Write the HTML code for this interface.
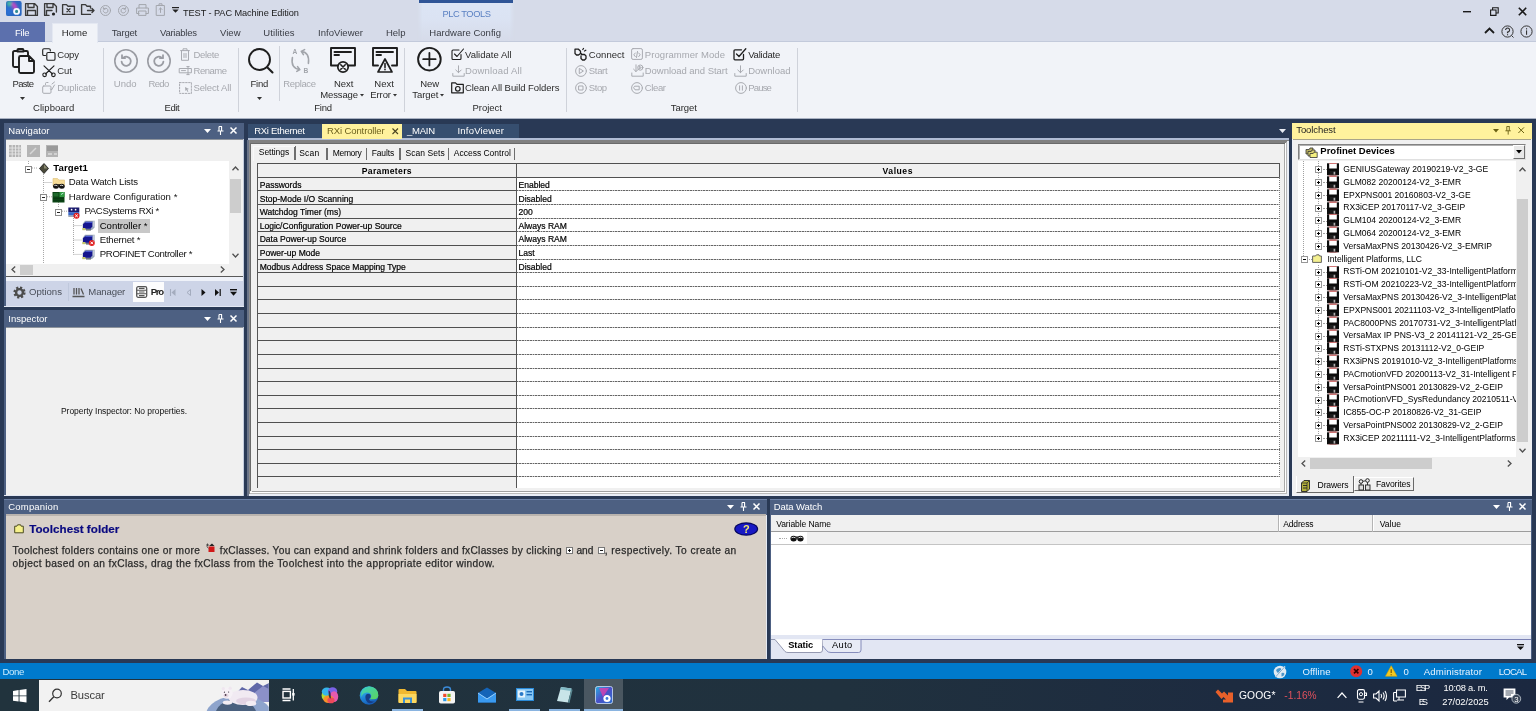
<!DOCTYPE html>
<html>
<head>
<meta charset="utf-8">
<title>TEST - PAC Machine Edition</title>
<style>
*{box-sizing:border-box;margin:0;padding:0}
html,body{width:1536px;height:711px;overflow:hidden;background:#293955;will-change:transform;font-family:"Liberation Sans",sans-serif;font-size:11px;color:#000}
.abs{position:absolute}
.t{position:absolute;white-space:nowrap;line-height:1}
svg{position:absolute;overflow:visible}
/* ---------- title / ribbon ---------- */
#titlebar{left:0;top:0;width:1536px;height:22px;background:#d6dbe9}
#tabrow{left:0;top:22px;width:1536px;height:20px;background:#d6dbe9;border-bottom:1px solid #c3cadb}
#ribbon{left:0;top:42px;width:1536px;height:77px;background:#f1f3f8;border-bottom:1px solid #a9b1c2}
.rt{font-size:11px;color:#1e1e1e}
.rd{font-size:11px;color:#a9abb0}
.rsep{position:absolute;width:1px;background:#d3d6de;top:47px;height:64px}
/* ---------- panels ---------- */
.ptitle{position:absolute;height:16px;background:#4d6082;color:#fff;font-size:11px}
.ptitle .t{top:2px;left:4px;color:#fff;font-size:11px}
.pbody{position:absolute;background:#f0f0f0}
.tree{font-size:11px}
/* ---------- grid ---------- */
.gl{position:absolute;left:258px;width:1021px;height:1px;background:#6b6b6b}
.dot{left:517px;width:762.5px;height:1.1px;background:repeating-linear-gradient(90deg,#666 0,#666 .9px,#c2c2c2 .9px,#c2c2c2 1.6px)}
.dl{position:absolute;left:517px;width:762px;height:0;border-top:1px dotted #8a8a8a}
.gp{position:absolute;left:259px;font-size:10px;color:#000;white-space:nowrap;line-height:1}
.gv{position:absolute;left:518px;font-size:10px;color:#000;white-space:nowrap;line-height:1}
.tc{position:absolute;font-size:9.5px;color:#000;white-space:nowrap;line-height:1;left:1343px}
</style>
</head>
<body>
<!-- TITLE BAR -->
<div id="titlebar" class="abs"></div>
<div id="tabrow" class="abs"></div>
<div id="ribbon" class="abs"></div>
<div class="abs" style="left:417px;top:0px;width:98px;height:41px;background:transparent;background:linear-gradient(180deg,#dce5f5 0%,#dbe3f3 45%,#d6dbe9 100%);-webkit-mask-image:linear-gradient(90deg,transparent 0,#000 6%,#000 94%,transparent 100%)"></div>
<div class="abs" style="left:419px;top:0px;width:94px;height:3px;background:#2f5597;"></div>
<div class="t" style="left:442.4px;top:9.7px;font-size:9.3px;color:#5a80c2;letter-spacing:-0.408px;">PLC TOOLS</div>
<svg style="left:6.4px;top:1.2px" width="15.8" height="15.1" viewBox="0 0 15.8 15.1"><defs><filter id="ab" x="-30%" y="-30%" width="160%" height="160%"><feGaussianBlur stdDeviation="1.1"/></filter><clipPath id="ac"><rect x="0" y="0" width="15.8" height="15.1" rx="2.2"/></clipPath></defs><g clip-path="url(#ac)"><rect x="0" y="0" width="15.8" height="15.1" fill="#2a68c2"/><g filter="url(#ab)"><circle cx="3.6" cy="2.6" r="2.6" fill="#45b8a4"/><ellipse cx="8.6" cy="5.4" rx="2.4" ry="4.6" transform="rotate(-28 8.6 5.4)" fill="#b84cc4"/><ellipse cx="3" cy="10" rx="3" ry="4" fill="#2a70d4"/></g><circle cx="10.6" cy="10.4" r="2.5" fill="#2f8a96" stroke="#f4f8ff" stroke-width="1.9"/></g></svg>
<svg style="left:25px;top:3px" width="13" height="13" viewBox="0 0 13 13"><path fill="none" stroke="#3a3a3a" stroke-linejoin="round" stroke-linecap="round" stroke-width="1.35" d="M.6 .6 H9.5 L12.4 3.5 V12.4 H.6 Z M3 .6 V4.5 H9 V.6 M2.5 12.4 V7.5 H10.5 V12.4"/></svg>
<svg style="left:44px;top:3px" width="13" height="13" viewBox="0 0 13 13"><path fill="none" stroke="#3a3a3a" stroke-linejoin="round" stroke-linecap="round" stroke-width="1.35" d="M.6 .6 H9.5 L12.4 3.5 V9 M.6 .6 V12.4 H5 M3 .6 V4.5 H9 V.6 M2.5 12.4 V7.5 H8"/><circle cx="9.5" cy="11" r="1.6" fill="#222"/></svg>
<svg style="left:62px;top:4px" width="13" height="11" viewBox="0 0 13 11"><path fill="none" stroke="#3a3a3a" stroke-linejoin="round" stroke-linecap="round" stroke-width="1.35" d="M.6 10.4 V.6 H4.5 L6 2.2 H12.4 V10.4 Z M5 4.8 L8 7.8 M8 4.8 L5 7.8"/></svg>
<svg style="left:81px;top:4px" width="14" height="11" viewBox="0 0 14 11"><path fill="none" stroke="#3a3a3a" stroke-linejoin="round" stroke-linecap="round" stroke-width="1.35" d="M9.5 10.4 H.6 V.6 H4.5 L6 2.2 H9.5 V4 M6.5 6.5 H13 M11 4.5 L13 6.5 L11 8.5"/></svg>
<svg style="left:100px;top:5px" width="11" height="11" viewBox="0 0 11 11"><circle cx="5.5" cy="5.5" r="5" fill="none" stroke="#a3a6ad" stroke-linejoin="round" stroke-linecap="round" stroke-width="1"/><path fill="none" stroke="#a3a6ad" stroke-linejoin="round" stroke-linecap="round" stroke-width="1" d="M3.2 5.8 A2.4 2.4 0 1 0 4.2 3.6 M3.4 2.6 V4.2 H5"/></svg>
<svg style="left:118px;top:5px" width="11" height="11" viewBox="0 0 11 11"><circle cx="5.5" cy="5.5" r="5" fill="none" stroke="#a3a6ad" stroke-linejoin="round" stroke-linecap="round" stroke-width="1"/><path fill="none" stroke="#a3a6ad" stroke-linejoin="round" stroke-linecap="round" stroke-width="1" d="M7.8 5.8 A2.4 2.4 0 1 1 6.8 3.6 M7.6 2.6 V4.2 H6"/></svg>
<svg style="left:136px;top:4px" width="13" height="12" viewBox="0 0 13 12"><path fill="none" stroke="#a3a6ad" stroke-linejoin="round" stroke-linecap="round" stroke-width="1" d="M3 4 V.6 H10 V4 M3 9.5 H.6 V4 H12.4 V9.5 H10 M3 7 H10 V11.4 H3 Z"/></svg>
<svg style="left:156px;top:3px" width="9" height="13" viewBox="0 0 9 13"><path fill="none" stroke="#a3a6ad" stroke-linejoin="round" stroke-linecap="round" stroke-width="1" d="M.6 2.5 H8.4 V12.4 H.6 Z M3 2.5 V.8 H6 V2.5 M4.5 5 V9.5 M3 6.5 L4.5 5 L6 6.5"/></svg>
<svg style="left:172px;top:7px" width="7" height="6" viewBox="0 0 7 6"><rect x="0" y="0" width="7" height="1.2" fill="#222"/><path d="M.3 2.6 H6.7 L3.5 5.8 Z" fill="#222"/></svg>
<div class="t" style="left:183.0px;top:8.6px;font-size:9.2px;color:#1a1a1a;letter-spacing:-0.071px;">TEST - PAC Machine Edition</div>
<svg style="left:1463px;top:11px" width="8" height="2" viewBox="0 0 8 2"><rect x="0" y="0" width="8" height="1.4" fill="#1a1a1a"/></svg>
<svg style="left:1490px;top:7px" width="9" height="9" viewBox="0 0 9 9"><path stroke="#1a1a1a" fill="none" stroke-width="1.1" d="M.6 3 H6 V8.4 H.6 Z M2.6 3 V.8 H8.2 V6 H6"/></svg>
<svg style="left:1518px;top:7px" width="9" height="9" viewBox="0 0 9 9"><path stroke="#1a1a1a" fill="none" stroke-width="1.6" d="M.8 .8 L8.2 8.2 M8.2 .8 L.8 8.2"/></svg>
<svg style="left:1484px;top:27px" width="11" height="7" viewBox="0 0 11 7"><path stroke="#1a1a1a" fill="none" stroke-width="1.8" d="M1 6 L5.5 1.5 L10 6"/></svg>
<svg style="left:1501px;top:25px" width="13" height="13" viewBox="0 0 13 13"><circle cx="6.5" cy="6.5" r="5.6" stroke="#333" fill="none" stroke-width="1"/><path stroke="#333" fill="none" stroke-width="1.1" d="M4.6 5 A2 2 0 1 1 6.5 7 V8.2"/><rect x="6" y="9.2" width="1.1" height="1.1" fill="#333"/><path stroke="#333" fill="none" stroke-width="1" d="M10.5 10.5 L12.5 12.5"/></svg>
<svg style="left:1520px;top:25px" width="13" height="13" viewBox="0 0 13 13"><circle cx="6.5" cy="6.5" r="5.6" stroke="#333" fill="none" stroke-width="1"/><rect x="6" y="3.2" width="1.1" height="1.2" fill="#333"/><rect x="6" y="5.4" width="1.1" height="4.4" fill="#333"/></svg>
<div class="abs" style="left:0px;top:22px;width:45px;height:19.5px;background:#5c70ad;"></div>
<div class="abs" style="left:52px;top:23px;width:46px;height:20px;background:#f1f3f8;border:1px solid #e4e8f2;border-bottom:none"></div>
<div class="t" style="left:15.0px;top:28.1px;font-size:9.5px;color:#ffffff;letter-spacing:-0.269px;">File</div>
<div class="t" style="left:61.8px;top:28.1px;font-size:9.5px;color:#222;letter-spacing:0.053px;">Home</div>
<div class="t" style="left:111.8px;top:28.1px;font-size:9.5px;color:#3a3d45;letter-spacing:-0.201px;">Target</div>
<div class="t" style="left:160.0px;top:28.1px;font-size:9.5px;color:#3a3d45;letter-spacing:-0.238px;">Variables</div>
<div class="t" style="left:220.0px;top:28.1px;font-size:9.5px;color:#3a3d45;letter-spacing:0.026px;">View</div>
<div class="t" style="left:263.3px;top:28.1px;font-size:9.5px;color:#3a3d45;letter-spacing:0.073px;">Utilities</div>
<div class="t" style="left:318.0px;top:28.1px;font-size:9.5px;color:#3a3d45;letter-spacing:0.032px;">InfoViewer</div>
<div class="t" style="left:386.0px;top:28.1px;font-size:9.5px;color:#3a3d45;letter-spacing:-0.013px;">Help</div>
<div class="t" style="left:429.3px;top:28.1px;font-size:9.5px;color:#3a3d45;letter-spacing:0.030px;">Hardware Config</div>

<div class="abs" style="left:103.0px;top:48px;width:1px;height:63.5px;background:#cfd2da;"></div>
<div class="abs" style="left:238.0px;top:48px;width:1px;height:63.5px;background:#cfd2da;"></div>
<div class="abs" style="left:279.0px;top:45.5px;width:1px;height:55.5px;background:#cfd2da;"></div>
<div class="abs" style="left:404.0px;top:48px;width:1px;height:63.5px;background:#cfd2da;"></div>
<div class="abs" style="left:566.0px;top:48px;width:1px;height:63.5px;background:#cfd2da;"></div>
<div class="abs" style="left:797.0px;top:48px;width:1px;height:63.5px;background:#cfd2da;"></div>
<div class="t" style="left:33.0px;top:103.3px;font-size:9.5px;color:#2a2a2a;letter-spacing:0.067px;">Clipboard</div>
<div class="t" style="left:164.6px;top:103.3px;font-size:9.5px;color:#2a2a2a;letter-spacing:-0.423px;">Edit</div>
<div class="t" style="left:314.3px;top:103.3px;font-size:9.5px;color:#2a2a2a;letter-spacing:-0.260px;">Find</div>
<div class="t" style="left:472.4px;top:103.3px;font-size:9.5px;color:#2a2a2a;letter-spacing:0.005px;">Project</div>
<div class="t" style="left:670.8px;top:103.3px;font-size:9.5px;color:#2a2a2a;letter-spacing:-0.061px;">Target</div>
<svg style="left:11.5px;top:48px" width="24" height="26" viewBox="0 0 24 26"><path fill="none" stroke="#1e1e1e" stroke-linejoin="round" stroke-linecap="round" stroke-width="1.9" d="M6 3 H2.5 Q1 3 1 4.5 V17.5 Q1 19 2.5 19 H7 M13 3 H14.5 Q16 3 16 4.5 V7 M6.5 1 H10.5 Q11.5 1 11.5 2 V3.5 H5.5 V2 Q5.5 1 6.5 1 Z M8.5 8 H17 L22 13 V23.5 Q22 25 20.5 25 H8.5 Q7 25 7 23.5 V9.5 Q7 8 8.5 8 Z M17 8 V13 H22"/></svg>
<div class="t" style="left:12.5px;top:79.1px;font-size:9.5px;color:#2a2a2a;letter-spacing:-0.698px;">Paste</div>
<svg style="left:20px;top:96.5px" width="5" height="3" viewBox="0 0 5 3"><path d="M0 0 H5 L2.5 3 Z" fill="#333"/></svg>
<svg style="left:42px;top:47.5px" width="14" height="13" viewBox="0 0 14 13"><path fill="none" stroke="#1e1e1e" stroke-linejoin="round" stroke-linecap="round" stroke-width="1.1" d="M3.5 7.5 H2 Q.7 7.5 .7 6.2 V2 Q.7 .7 2 .7 H7 Q8.3 .7 8.3 2 V3 M6 4.5 H11.8 Q13 4.5 13 5.7 V11 Q13 12.3 11.8 12.3 H6 Q4.8 12.3 4.8 11 V5.7 Q4.8 4.5 6 4.5 Z"/></svg>
<div class="t" style="left:57.3px;top:49.6px;font-size:9.5px;color:#2a2a2a;letter-spacing:-0.159px;">Copy</div>
<svg style="left:42px;top:64.5px" width="14" height="12" viewBox="0 0 14 12"><path fill="none" stroke="#1e1e1e" stroke-linejoin="round" stroke-linecap="round" stroke-width="1.1" d="M2 .8 L10.5 9 M12 .8 L3.5 9"/><circle cx="2.6" cy="9.8" r="1.8" fill="none" stroke="#1e1e1e" stroke-linejoin="round" stroke-linecap="round" stroke-width="1.1"/><circle cx="11.4" cy="9.8" r="1.8" fill="none" stroke="#1e1e1e" stroke-linejoin="round" stroke-linecap="round" stroke-width="1.1"/></svg>
<div class="t" style="left:57.3px;top:65.9px;font-size:9.5px;color:#2a2a2a;letter-spacing:-0.042px;">Cut</div>
<svg style="left:42px;top:81px" width="14" height="13" viewBox="0 0 14 13"><path fill="none" stroke="#a9abb1" stroke-linejoin="round" stroke-linecap="round" stroke-width="1" d="M1.8 5 H8 Q9 5 9 6 V11.2 Q9 12.3 8 12.3 H1.8 Q.7 12.3 .7 11.2 V6 Q.7 5 1.8 5 Z M3.5 3.5 V2.5 Q3.5 1.5 4.5 1.5 H6 M10 3 L12.5 1 M12.5 4 L9.5 9 L8.5 8"/></svg>
<div class="t" style="left:57.3px;top:83.1px;font-size:9.5px;color:#a6a8ae;letter-spacing:-0.113px;">Duplicate</div>
<svg style="left:113.5px;top:48.5px" width="24" height="24" viewBox="0 0 24 24"><circle cx="12" cy="12" r="11.2" fill="none" stroke="#9a9ca3" stroke-width="1.6"/><path fill="none" stroke="#9a9ca3" stroke-linecap="round" stroke-linejoin="round" stroke-width="1.8" d="M7.6 12.6 A4.6 4.6 0 1 0 9.4 8.6 M8 6.2 V9.2 H11"/></svg>
<div class="t" style="left:113.8px;top:79.1px;font-size:9.5px;color:#a6a8ae;">Undo</div>
<svg style="left:146.5px;top:48.5px" width="24" height="24" viewBox="0 0 24 24"><circle cx="12" cy="12" r="11.2" fill="none" stroke="#9a9ca3" stroke-width="1.6"/><path fill="none" stroke="#9a9ca3" stroke-linecap="round" stroke-linejoin="round" stroke-width="1.8" d="M16.4 12.6 A4.6 4.6 0 1 1 14.6 8.6 M16 6.2 V9.2 H13"/></svg>
<div class="t" style="left:148.4px;top:79.1px;font-size:9.5px;color:#a6a8ae;letter-spacing:-0.604px;">Redo</div>
<svg style="left:180px;top:47.5px" width="10" height="13" viewBox="0 0 10 13"><path fill="none" stroke="#a9abb1" stroke-linejoin="round" stroke-linecap="round" stroke-width="1" d="M.6 2.6 H9.4 M3 2.6 V.8 H7 V2.6 M1.5 2.6 V12.3 H8.5 V2.6 M4 5.5 V9.5 M6 5.5 V9.5"/></svg>
<div class="t" style="left:193.5px;top:49.6px;font-size:9.5px;color:#a6a8ae;letter-spacing:-0.332px;">Delete</div>
<svg style="left:178.5px;top:66px" width="13" height="9" viewBox="0 0 13 9"><path fill="none" stroke="#a9abb1" stroke-linejoin="round" stroke-linecap="round" stroke-width="1" d="M.6 2.5 H12.4 V6.8 H.6 Z M2.5 4.6 H6.5 M9 .6 V8.6 M7.8 .6 H10.2 M7.8 8.6 H10.2"/></svg>
<div class="t" style="left:193.5px;top:65.9px;font-size:9.5px;color:#a6a8ae;letter-spacing:-0.482px;">Rename</div>
<svg style="left:178.5px;top:82px" width="13" height="12" viewBox="0 0 13 12"><rect x=".6" y=".6" width="11.8" height="10.8" fill="none" stroke="#a9abb1" stroke-linejoin="round" stroke-linecap="round" stroke-width="1" stroke-dasharray="1.6 1.4"/><path d="M6 5 L10 7 L8.3 7.6 L9.4 9.6 L8.6 10 L7.5 8 L6.4 9 Z" fill="#a9abb1"/></svg>
<div class="t" style="left:193.5px;top:83.1px;font-size:9.5px;color:#a6a8ae;letter-spacing:-0.142px;">Select All</div>
<svg style="left:247.7px;top:47.6px" width="26" height="26" viewBox="0 0 26 26"><circle cx="11.5" cy="11.5" r="10.5" fill="none" stroke="#1e1e1e" stroke-linejoin="round" stroke-linecap="round" stroke-width="1.9"/><path fill="none" stroke="#1e1e1e" stroke-linejoin="round" stroke-linecap="round" stroke-width="2.1" d="M19.2 19.2 L24.5 24.5"/></svg>
<div class="t" style="left:250.5px;top:79.1px;font-size:9.5px;color:#2a2a2a;letter-spacing:-0.260px;">Find</div>
<svg style="left:257px;top:96.5px" width="5" height="3" viewBox="0 0 5 3"><path d="M0 0 H5 L2.5 3 Z" fill="#333"/></svg>
<svg style="left:289px;top:47px" width="22" height="27" viewBox="0 0 22 27"><path fill="none" stroke="#a2a5ab" stroke-linecap="round" stroke-linejoin="round" stroke-width="1.6" d="M12.3 4.4 Q20.8 5.4 19.4 16.4 M12.3 4.4 L15.6 2.6 M12.3 4.4 L14.4 7.6 M3.4 10.6 Q1.4 21 10.8 22.6 M10.8 22.6 L7.8 24.4 M10.8 22.6 L8.6 19.6"/><text x="3.6" y="7" font-size="6.6" font-family="Liberation Sans" font-weight="bold" fill="#a2a5ab">A</text><text x="14.6" y="25.6" font-size="6.6" font-family="Liberation Sans" font-weight="bold" fill="#a2a5ab">B</text></svg>
<div class="t" style="left:283.3px;top:79.1px;font-size:9.5px;color:#a6a8ae;letter-spacing:-0.359px;">Replace</div>
<svg style="left:330.4px;top:47.3px" width="26" height="27" viewBox="0 0 26 27"><path fill="none" stroke="#1e1e1e" stroke-linejoin="round" stroke-linecap="round" stroke-width="1.9" d="M8 18.5 H1 V1 H25 V18.5 H18 M4.5 5 H21 M4.5 8 H9"/><circle cx="13" cy="20" r="5.2" fill="none" stroke="#1e1e1e" stroke-linejoin="round" stroke-linecap="round" stroke-width="1.7" fill="#f1f3f8"/><path fill="none" stroke="#1e1e1e" stroke-linejoin="round" stroke-linecap="round" stroke-width="1.6" d="M10.8 17.8 L15.2 22.2 M15.2 17.8 L10.8 22.2"/></svg>
<div class="t" style="left:333.9px;top:79.1px;font-size:9.5px;color:#2a2a2a;letter-spacing:-0.011px;">Next</div>
<div class="t" style="left:320.3px;top:89.6px;font-size:9.5px;color:#2a2a2a;letter-spacing:-0.141px;">Message</div>
<svg style="left:359.5px;top:93.5px" width="4" height="2.5" viewBox="0 0 4 2.5"><path d="M0 0 H4 L2 2.5 Z" fill="#333"/></svg>
<svg style="left:372px;top:47.3px" width="26" height="27" viewBox="0 0 26 27"><path fill="none" stroke="#1e1e1e" stroke-linejoin="round" stroke-linecap="round" stroke-width="1.9" d="M6 18.5 H1 V1 H25 V18.5 H20 M4.5 5 H21 M4.5 8 H9"/><path fill="none" stroke="#1e1e1e" stroke-linejoin="round" stroke-linecap="round" stroke-width="1.7" fill="#f1f3f8" d="M13 12 L20 25 H6 Z"/><path fill="none" stroke="#1e1e1e" stroke-linejoin="round" stroke-linecap="round" stroke-width="1.6" d="M13 16.5 V20.5 M13 22.4 V22.8"/></svg>
<div class="t" style="left:374.2px;top:79.1px;font-size:9.5px;color:#2a2a2a;letter-spacing:0.089px;">Next</div>
<div class="t" style="left:370.3px;top:89.6px;font-size:9.5px;color:#2a2a2a;letter-spacing:-0.103px;">Error</div>
<svg style="left:392.5px;top:93.5px" width="4" height="2.5" viewBox="0 0 4 2.5"><path d="M0 0 H4 L2 2.5 Z" fill="#333"/></svg>
<svg style="left:417px;top:47.4px" width="25" height="25" viewBox="0 0 25 25"><circle cx="12.4" cy="12.2" r="11.3" fill="none" stroke="#1e1e1e" stroke-linejoin="round" stroke-linecap="round" stroke-width="1.9"/><path fill="none" stroke="#1e1e1e" stroke-linejoin="round" stroke-linecap="round" stroke-width="1.8" d="M12.4 6 V18.4 M6.2 12.2 H18.6"/></svg>
<div class="t" style="left:420.3px;top:79.1px;font-size:9.5px;color:#2a2a2a;letter-spacing:-0.153px;">New</div>
<div class="t" style="left:412.2px;top:89.6px;font-size:9.5px;color:#2a2a2a;letter-spacing:-0.021px;">Target</div>
<svg style="left:440px;top:93.5px" width="4" height="2.5" viewBox="0 0 4 2.5"><path d="M0 0 H4 L2 2.5 Z" fill="#333"/></svg>
<svg style="left:451px;top:48px" width="14" height="13" viewBox="0 0 14 13"><path fill="none" stroke="#1e1e1e" stroke-linejoin="round" stroke-linecap="round" stroke-width="1.1" d="M10 6.5 V10.5 Q10 11.5 9 11.5 H2 Q1 11.5 1 10.5 V3 Q1 2 2 2 H8 M3.5 6 L6 8.5 L12.5 1"/></svg>
<div class="t" style="left:465.0px;top:49.6px;font-size:9.5px;color:#2a2a2a;letter-spacing:0.018px;">Validate All</div>
<svg style="left:451.5px;top:64.5px" width="13" height="12" viewBox="0 0 13 12"><path fill="none" stroke="#a9abb1" stroke-linejoin="round" stroke-linecap="round" stroke-width="1" d="M6.5 .8 V7.5 M3.8 5 L6.5 7.7 L9.2 5 M.8 8.5 V11.2 H12.2 V8.5"/></svg>
<div class="t" style="left:465.0px;top:65.9px;font-size:9.5px;color:#a6a8ae;letter-spacing:0.180px;">Download All</div>
<svg style="left:451px;top:81.5px" width="13" height="12" viewBox="0 0 13 12"><path fill="none" stroke="#1e1e1e" stroke-linejoin="round" stroke-linecap="round" stroke-width="1.2" d="M.7 10.8 V.8 H4.5 L6 2.4 H12.3 V10.8 Z"/><circle cx="6.8" cy="6.8" r="2.3" fill="none" stroke="#1e1e1e" stroke-linejoin="round" stroke-linecap="round" stroke-width="1.2"/></svg>
<div class="t" style="left:465.0px;top:83.1px;font-size:9.5px;color:#2a2a2a;letter-spacing:-0.054px;">Clean All Build Folders</div>
<svg style="left:574px;top:47.5px" width="13" height="13" viewBox="0 0 13 13"><path fill="none" stroke="#1e1e1e" stroke-linejoin="round" stroke-linecap="round" stroke-width="1.3" d="M1 1.2 H4.5 L6.5 3.2 V5.5 L4.5 7 H2.5 L1 5.5 Z M6.5 5 L8 6.5 M7.5 6.5 H10.5 L12 8 V10.5 L10.5 12 H8.5 L7 10.5 V8 M8.8 1.5 L9.5 .5 M10.5 3 L11.8 2.3"/></svg>
<div class="t" style="left:588.8px;top:49.6px;font-size:9.5px;color:#2a2a2a;letter-spacing:0.053px;">Connect</div>
<svg style="left:574.5px;top:65px" width="12" height="12" viewBox="0 0 12 12"><circle cx="6" cy="6" r="5.4" fill="none" stroke="#a9abb1" stroke-linejoin="round" stroke-linecap="round" stroke-width="1"/><path fill="none" stroke="#a9abb1" stroke-linejoin="round" stroke-linecap="round" stroke-width="1" d="M4.6 3.6 L8.4 6 L4.6 8.4 Z"/></svg>
<div class="t" style="left:588.8px;top:65.9px;font-size:9.5px;color:#a6a8ae;letter-spacing:-0.316px;">Start</div>
<svg style="left:574.5px;top:82px" width="12" height="12" viewBox="0 0 12 12"><circle cx="6" cy="6" r="5.4" fill="none" stroke="#a9abb1" stroke-linejoin="round" stroke-linecap="round" stroke-width="1"/><rect x="4" y="4" width="4" height="4" fill="none" stroke="#a9abb1" stroke-linejoin="round" stroke-linecap="round" stroke-width="1"/></svg>
<div class="t" style="left:588.8px;top:83.1px;font-size:9.5px;color:#a6a8ae;letter-spacing:-0.448px;">Stop</div>
<svg style="left:630.5px;top:48px" width="12" height="12" viewBox="0 0 12 12"><rect x=".6" y=".6" width="10.8" height="10.8" rx="1.5" fill="none" stroke="#a9abb1" stroke-linejoin="round" stroke-linecap="round" stroke-width="1"/><path fill="none" stroke="#a9abb1" stroke-linejoin="round" stroke-linecap="round" stroke-width="1" d="M4.3 5 L2.8 6.8 L4.3 8.6 M7.7 5 L9.2 6.8 L7.7 8.6 M6.5 3.5 L5.5 9.5"/></svg>
<div class="t" style="left:644.8px;top:49.6px;font-size:9.5px;color:#a6a8ae;letter-spacing:0.072px;">Programmer Mode</div>
<svg style="left:630.5px;top:64px" width="13" height="13" viewBox="0 0 13 13"><path fill="none" stroke="#a9abb1" stroke-linejoin="round" stroke-linecap="round" stroke-width="1" d="M5 .8 V7.5 M2.6 5.2 L5 7.6 L7.4 5.2 M.8 9 V12.2 H12.2 V9"/><circle cx="9.3" cy="3.6" r="2.6" fill="none" stroke="#a9abb1" stroke-linejoin="round" stroke-linecap="round" stroke-width="1"/><path fill="none" stroke="#a9abb1" stroke-linejoin="round" stroke-linecap="round" stroke-width="1" d="M8.6 2.5 L10.4 3.6 L8.6 4.7 Z"/></svg>
<div class="t" style="left:644.8px;top:65.9px;font-size:9.5px;color:#a6a8ae;letter-spacing:-0.038px;">Download and Start</div>
<svg style="left:630.5px;top:82px" width="12" height="12" viewBox="0 0 12 12"><circle cx="6" cy="6" r="5.4" fill="none" stroke="#a9abb1" stroke-linejoin="round" stroke-linecap="round" stroke-width="1"/><path fill="none" stroke="#a9abb1" stroke-linejoin="round" stroke-linecap="round" stroke-width="1" d="M4 4.2 H8.2 V7.8 H4 L2.8 6 Z"/></svg>
<div class="t" style="left:644.8px;top:83.1px;font-size:9.5px;color:#a6a8ae;letter-spacing:-0.376px;">Clear</div>
<svg style="left:733px;top:47.5px" width="14" height="13" viewBox="0 0 14 13"><path fill="none" stroke="#1e1e1e" stroke-linejoin="round" stroke-linecap="round" stroke-width="1.3" d="M10.5 6.5 V10.8 Q10.5 11.8 9.5 11.8 H2 Q1 11.8 1 10.8 V2.8 Q1 1.8 2 1.8 H8.5 M3.5 6 L6 8.5 L12.8 .8"/></svg>
<div class="t" style="left:748.2px;top:49.6px;font-size:9.5px;color:#2a2a2a;letter-spacing:-0.232px;">Validate</div>
<svg style="left:734px;top:64.5px" width="13" height="12" viewBox="0 0 13 12"><path fill="none" stroke="#a9abb1" stroke-linejoin="round" stroke-linecap="round" stroke-width="1" d="M6.5 .8 V7.5 M3.8 5 L6.5 7.7 L9.2 5 M.8 8.5 V11.2 H12.2 V8.5"/></svg>
<div class="t" style="left:748.2px;top:65.9px;font-size:9.5px;color:#a6a8ae;letter-spacing:0.021px;">Download</div>
<svg style="left:734.5px;top:82px" width="12" height="12" viewBox="0 0 12 12"><circle cx="6" cy="6" r="5.4" fill="none" stroke="#a9abb1" stroke-linejoin="round" stroke-linecap="round" stroke-width="1"/><path fill="none" stroke="#a9abb1" stroke-linejoin="round" stroke-linecap="round" stroke-width="1" d="M4.6 3.8 V8.2 M7.4 3.8 V8.2"/></svg>
<div class="t" style="left:748.2px;top:83.1px;font-size:9.5px;color:#a6a8ae;letter-spacing:-0.809px;">Pause</div>

<div class="abs" style="left:4px;top:122.5px;width:240px;height:183.5px;background:#4d6082;"></div>
<div class="t" style="left:8.3px;top:125.7px;font-size:9.5px;color:#fff;letter-spacing:0.068px;">Navigator</div>
<svg style="left:204.3px;top:129.1px" width="7" height="4" viewBox="0 0 7 4"><path d="M0 0 H7 L3.5 4 Z" fill="#fff"/></svg>
<svg style="left:217.3px;top:126.1px" width="7" height="9" viewBox="0 0 7 9"><path d="M2 .5 H5 M2 .5 V5 M4.6 .5 V5 M.5 5 H6.5 M3.5 5 V9" stroke="#fff" stroke-width="1.1" fill="none"/><rect x="4" y=".5" width="1" height="4.5" fill="#fff"/></svg>
<svg style="left:230.3px;top:127.1px" width="7" height="7" viewBox="0 0 7 7"><path d="M.5 .5 L6.5 6.5 M6.5 .5 L.5 6.5" stroke="#fff" stroke-width="1.5" fill="none"/></svg>
<div class="abs" style="left:6px;top:139px;width:237px;height:138px;background:#f0f0f0;"></div>
<div class="abs" style="left:243px;top:139px;width:1px;height:167px;background:#c3ccdd;"></div>
<div class="abs" style="left:6px;top:139px;width:237px;height:1.3px;background:#8e949c;"></div>
<div class="abs" style="left:8.7px;top:145px;width:12.5px;height:11.8px;background:#b4b4b4;"></div>
<div class="abs" style="left:27px;top:145px;width:12.5px;height:11.8px;background:#b4b4b4;"></div>
<div class="abs" style="left:45.8px;top:145px;width:12.5px;height:11.8px;background:#b4b4b4;"></div>
<svg style="left:8.7px;top:145px" width="13" height="12" viewBox="0 0 13 12"><path d="M0 3 H13 M0 6 H13 M0 9 H13 M3.2 0 V12 M6.5 0 V12 M9.8 0 V12" stroke="#e6e6e6" stroke-width=".9"/></svg>
<svg style="left:27px;top:145px" width="13" height="12" viewBox="0 0 13 12"><path d="M3 9 L6 6 L9 3" stroke="#d8d8d8" stroke-width="1.4"/></svg>
<svg style="left:45.8px;top:145px" width="13" height="12" viewBox="0 0 13 12"><rect x="1" y="1" width="11" height="5" fill="#9a9a9a"/><path d="M2 9 H6 M8 9 H11" stroke="#dcdcdc" stroke-width="1.4"/></svg>
<div class="abs" style="left:6px;top:161px;width:223px;height:102.5px;background:#ffffff;"></div>
<svg style="left:0px;top:161px" width="230" height="103" viewBox="0 0 230 103"><path stroke="#a8a8a8" stroke-width="1" stroke-dasharray="1 1" fill="none" d="M28.5 0 V3.5 M32 7 H38 M43.5 11 V102 M43.5 21.5 H52 M47 35.8 H52 M58.5 41 V46 M62 50.2 H68 M73.5 55 V93.5 M73.5 64.6 H82 M73.5 79 H82 M73.5 93.4 H82"/></svg>
<svg style="left:24.8px;top:165.6px" width="7" height="7" viewBox="0 0 7 7"><rect x=".5" y=".5" width="6" height="6" fill="#fff" stroke="#8a8a8a" stroke-width="1"/><path d="M2 3.5 H5" stroke="#222" stroke-width="1"/></svg>
<svg style="left:40.2px;top:194.4px" width="7" height="7" viewBox="0 0 7 7"><rect x=".5" y=".5" width="6" height="6" fill="#fff" stroke="#8a8a8a" stroke-width="1"/><path d="M2 3.5 H5" stroke="#222" stroke-width="1"/></svg>
<svg style="left:55.3px;top:208.79999999999998px" width="7" height="7" viewBox="0 0 7 7"><rect x=".5" y=".5" width="6" height="6" fill="#fff" stroke="#8a8a8a" stroke-width="1"/><path d="M2 3.5 H5" stroke="#222" stroke-width="1"/></svg>
<svg style="left:38.8px;top:162.5px" width="10" height="11" viewBox="0 0 10 11"><path d="M5 .5 L9.5 5.5 L5 10.5 L.5 5.5 Z" fill="#4a4a3a" stroke="#1a1a1a" stroke-width=".8"/><path d="M5 1.5 L8.5 5.5 L5 5.5 Z" fill="#8a8a70"/></svg>
<div class="t" style="left:53.3px;top:163.0px;font-size:9.6px;color:#000;font-weight:bold;letter-spacing:0.089px;">Target1</div>
<svg style="left:52px;top:176px" width="13" height="13" viewBox="0 0 13 13"><path d="M1 2.5 H5.5 L7 4 H12.5 V10 H1 Z" fill="#f6dc98" stroke="#dcc078" stroke-width=".6"/><ellipse cx="4" cy="10.2" rx="2.9" ry="2.5" fill="#111"/><ellipse cx="9.8" cy="10.2" rx="2.9" ry="2.5" fill="#111"/><path d="M2.4 9.6 Q4 8.6 5.4 9.8 M8.2 9.6 Q9.8 8.6 11.2 9.8" stroke="#f4f4f4" stroke-width=".9" fill="none"/><path d="M6 8.8 H8" stroke="#111" stroke-width="1.2"/></svg>
<div class="t" style="left:68.8px;top:177.4px;font-size:9.6px;color:#111;letter-spacing:-0.200px;">Data Watch Lists</div>
<svg style="left:52px;top:190.5px" width="13" height="13" viewBox="0 0 13 13"><rect x=".5" y="1" width="12" height="10.5" fill="#0b4415"/><rect x="1.5" y="2" width="5" height="3.5" fill="#1f6a2c"/><rect x="7.5" y="1" width="5" height="5" fill="#2f9a40"/><path d="M9 3.5 L11.5 2" stroke="#dff" stroke-width=".8"/><path d="M1 7.5 H12 M1 9.5 H12" stroke="#083a12" stroke-width=".9"/></svg>
<div class="t" style="left:68.8px;top:191.8px;font-size:9.6px;color:#111;letter-spacing:0.039px;">Hardware Configuration *</div>
<svg style="left:67.9px;top:206.5px" width="12" height="13" viewBox="0 0 12 13"><rect x=".3" y=".5" width="11" height="4.6" fill="#1b1b6e"/><circle cx="3.6" cy="2.7" r=".85" fill="#fff"/><circle cx="7.6" cy="2.7" r=".85" fill="#fff"/><rect x=".3" y="5.1" width="11" height="3.4" fill="#3868c8"/><rect x=".3" y="8.5" width="6" height="1.3" fill="#8890a0"/><circle cx="8.5" cy="8.8" r="3" fill="#e02020"/><path d="M7.2 7.5 L9.8 10.1 M9.8 7.5 L7.2 10.1" stroke="#fff" stroke-width="1"/></svg>
<div class="t" style="left:84.5px;top:206.2px;font-size:9.6px;color:#111;letter-spacing:-0.378px;">PACSystems RXi *</div>
<div class="abs" style="left:98px;top:218.8px;width:51.5px;height:13.9px;background:#c8c8c8;"></div>
<svg style="left:82.3px;top:220.1px" width="13" height="12" viewBox="0 0 13 12"><path d="M3 .8 H12.6 V7.4 L10 10 H.6 V4 Z" fill="#9aa8bc"/><path d="M1 4.3 L3.7 1.8 H10.6 V6 L8.6 8.8 H1 Z" fill="#15158e"/><path d="M3.9 2 H10.6 V3.1 H2.8 Z" fill="#4656cc"/><path d="M10.6 1.8 L12.6 .8 V7.4 L10.6 6 Z" fill="#c4ccd8"/><rect x=".4" y="8" width="3" height="2.2" fill="#c6c868"/><rect x="4" y="9" width="5" height="1.6" fill="#6c7480"/></svg>
<div class="t" style="left:99.7px;top:220.6px;font-size:9.6px;color:#000;letter-spacing:-0.020px;">Controller *</div>
<svg style="left:82.3px;top:234.4px" width="13" height="12" viewBox="0 0 13 12"><path d="M3 .8 H12.6 V7.4 L10 10 H.6 V4 Z" fill="#9aa8bc"/><path d="M1 4.3 L3.7 1.8 H10.6 V6 L8.6 8.8 H1 Z" fill="#15158e"/><path d="M3.9 2 H10.6 V3.1 H2.8 Z" fill="#4656cc"/><path d="M10.6 1.8 L12.6 .8 V7.4 L10.6 6 Z" fill="#c4ccd8"/><rect x=".4" y="8" width="3" height="2.2" fill="#c6c868"/><rect x="4" y="9" width="5" height="1.6" fill="#6c7480"/><circle cx="9.8" cy="8.9" r="3" fill="#e02020"/><path d="M8.5 7.6 L11.1 10.2 M11.1 7.6 L8.5 10.2" stroke="#fff" stroke-width="1"/></svg>
<div class="t" style="left:99.7px;top:235.0px;font-size:9.6px;color:#111;letter-spacing:-0.211px;">Ethernet *</div>
<svg style="left:82.3px;top:248.79999999999998px" width="13" height="12" viewBox="0 0 13 12"><path d="M3 .8 H12.6 V7.4 L10 10 H.6 V4 Z" fill="#9aa8bc"/><path d="M1 4.3 L3.7 1.8 H10.6 V6 L8.6 8.8 H1 Z" fill="#15158e"/><path d="M3.9 2 H10.6 V3.1 H2.8 Z" fill="#4656cc"/><path d="M10.6 1.8 L12.6 .8 V7.4 L10.6 6 Z" fill="#c4ccd8"/><rect x=".4" y="8" width="3" height="2.2" fill="#c6c868"/><rect x="4" y="9" width="5" height="1.6" fill="#6c7480"/></svg>
<div class="t" style="left:99.7px;top:249.4px;font-size:9.6px;color:#111;letter-spacing:-0.312px;">PROFINET Controller *</div>
<div class="abs" style="left:229px;top:161px;width:14px;height:102.5px;background:#f0f0f0;"></div>
<div class="abs" style="left:229.5px;top:179px;width:11.5px;height:34.3px;background:#cdcdcd;"></div>
<svg style="left:232px;top:165.5px" width="7" height="5" viewBox="0 0 7 5"><path stroke="#505050" stroke-width="1.3" fill="none" d="M.5 4.2 L3.5 1 L6.5 4.2"/></svg>
<svg style="left:232px;top:252.5px" width="7" height="5" viewBox="0 0 7 5"><path stroke="#505050" stroke-width="1.3" fill="none" d="M.5 .8 L3.5 4 L6.5 .8"/></svg>
<div class="abs" style="left:6px;top:263.5px;width:237px;height:12.5px;background:#f0f0f0;"></div>
<div class="abs" style="left:20px;top:264.5px;width:13.3px;height:10.5px;background:#cdcdcd;"></div>
<svg style="left:10.5px;top:265.5px" width="5" height="7" viewBox="0 0 5 7"><path stroke="#505050" stroke-width="1.3" fill="none" d="M4.2 .5 L1 3.5 L4.2 6.5"/></svg>
<svg style="left:219.5px;top:265.5px" width="5" height="7" viewBox="0 0 5 7"><path stroke="#505050" stroke-width="1.3" fill="none" d="M.8 .5 L4 3.5 L.8 6.5"/></svg>
<div class="abs" style="left:6px;top:275.8px;width:237px;height:0.9px;background:#5a5a5a;"></div>
<div class="abs" style="left:6px;top:276.6px;width:237px;height:29px;background:#cdd4e7;"></div>
<div class="abs" style="left:6px;top:276.6px;width:237px;height:4.9px;background:#eff2f9;"></div>
<div class="abs" style="left:4px;top:305.6px;width:240px;height:1.4px;background:#e4e9f3;"></div>
<div class="abs" style="left:133px;top:281.7px;width:31px;height:20px;background:#fcfcfd;"></div>
<div class="abs" style="left:67.5px;top:283px;width:1px;height:18px;background:#bfc8dc;"></div>
<svg style="left:12.8px;top:285.8px" width="13" height="13" viewBox="0 0 13 13"><circle cx="6.5" cy="6.5" r="4.6" fill="none" stroke="#4c4c4c" stroke-width="3" stroke-dasharray="2 1.6"/><circle cx="6.5" cy="6.5" r="3.4" fill="none" stroke="#4c4c4c" stroke-width="2.4"/></svg>
<div class="t" style="left:29.0px;top:287.0px;font-size:9.6px;color:#4a4f5a;letter-spacing:-0.014px;">Options</div>
<svg style="left:72px;top:286.5px" width="13" height="11" viewBox="0 0 13 11"><path d="M2 1 V7.5 M4.5 1 V7.5 M7 1 V7.5 M9 1.5 L11.5 7.5 M.5 9.5 H12.5" stroke="#555" stroke-width="1.3" fill="none"/></svg>
<div class="t" style="left:88.3px;top:287.0px;font-size:9.6px;color:#4a4f5a;letter-spacing:-0.148px;">Manager</div>
<svg style="left:136.3px;top:286px" width="11.5" height="12" viewBox="0 0 11.5 12"><rect x=".7" y=".7" width="10" height="10.6" rx="1.5" fill="none" stroke="#555" stroke-width="1.3"/><path d="M1 4.2 H10.5 M1 7.8 H10.5 M3 2.4 H8.5 M3 6 H8.5 M3 9.6 H8.5" stroke="#555" stroke-width="1.1"/></svg>
<div class="t" style="left:150.8px;top:287.0px;font-size:9.6px;color:#222;font-weight:bold;letter-spacing:-1.402px;width:13.2px;overflow:hidden;">Pro</div>
<svg style="left:169.5px;top:288.5px" width="6" height="7" viewBox="0 0 6 7"><path d="M.5 0 V7" stroke="#a4acbe" stroke-width="1.1"/><path d="M5.5 0 L1.5 3.5 L5.5 7 Z" fill="#a4acbe"/></svg>
<svg style="left:185.5px;top:288.5px" width="5" height="7" viewBox="0 0 5 7"><path d="M4.5 .5 L1 3.5 L4.5 6.5 Z" fill="none" stroke="#a4acbe" stroke-width="1"/></svg>
<svg style="left:200.5px;top:288.5px" width="5" height="7" viewBox="0 0 5 7"><path d="M.5 0 L4.5 3.5 L.5 7 Z" fill="#111"/></svg>
<svg style="left:215px;top:288.5px" width="6" height="7" viewBox="0 0 6 7"><path d="M0 0 L4 3.5 L0 7 Z" fill="#111"/><path d="M5.2 0 V7" stroke="#111" stroke-width="1.2"/></svg>
<svg style="left:229.5px;top:288.5px" width="7" height="7" viewBox="0 0 7 7"><rect x="0" y="0" width="7" height="1.4" fill="#111"/><path d="M0 2.8 H7 L3.5 6.8 Z" fill="#111"/></svg>

<div class="abs" style="left:4px;top:310px;width:240px;height:185.5px;background:#4d6082;"></div>
<div class="t" style="left:8.3px;top:313.9px;font-size:9.5px;color:#fff;letter-spacing:0.015px;">Inspector</div>
<svg style="left:204.3px;top:316.7px" width="7" height="4" viewBox="0 0 7 4"><path d="M0 0 H7 L3.5 4 Z" fill="#fff"/></svg>
<svg style="left:217.3px;top:313.7px" width="7" height="9" viewBox="0 0 7 9"><path d="M2 .5 H5 M2 .5 V5 M4.6 .5 V5 M.5 5 H6.5 M3.5 5 V9" stroke="#fff" stroke-width="1.1" fill="none"/><rect x="4" y=".5" width="1" height="4.5" fill="#fff"/></svg>
<svg style="left:230.3px;top:314.7px" width="7" height="7" viewBox="0 0 7 7"><path d="M.5 .5 L6.5 6.5 M6.5 .5 L.5 6.5" stroke="#fff" stroke-width="1.5" fill="none"/></svg>
<div class="abs" style="left:6px;top:326.5px;width:237px;height:168.2px;background:#f0f0f0;"></div>
<div class="abs" style="left:4px;top:494.6px;width:240px;height:1px;background:#e4e9f3;"></div>
<div class="abs" style="left:243px;top:326.5px;width:1px;height:169px;background:#c3ccdd;"></div>
<div class="abs" style="left:6px;top:326.5px;width:237px;height:1.3px;background:#8e949c;"></div>
<div class="t" style="left:61.0px;top:407.3px;font-size:8.5px;color:#111;letter-spacing:-0.047px;">Property Inspector: No properties.</div>

<div class="abs" style="left:247.5px;top:137.7px;width:1041.2px;height:2.4px;background:#b0bcd4;"></div>
<div class="abs" style="left:248px;top:123.6px;width:270.5px;height:14.2px;background:#364e6f;"></div>
<div class="abs" style="left:321.9px;top:124.1px;width:80.1px;height:15.2px;background:#fff29d;"></div>
<div class="t" style="left:254.2px;top:126.1px;font-size:9.5px;color:#fff;letter-spacing:-0.278px;">RXi Ethernet</div>
<div class="t" style="left:327.0px;top:126.1px;font-size:9.5px;color:#6e621e;letter-spacing:-0.110px;">RXi Controller</div>
<svg style="left:391.5px;top:128px" width="6.5" height="6.5" viewBox="0 0 6.5 6.5"><path d="M.5 .5 L6 6 M6 .5 L.5 6" stroke="#4a4420" stroke-width="1.1"/></svg>
<div class="t" style="left:407.0px;top:126.1px;font-size:9.5px;color:#fff;letter-spacing:-0.259px;">_MAIN</div>
<div class="t" style="left:457.5px;top:126.1px;font-size:9.5px;color:#fff;letter-spacing:0.198px;">InfoViewer</div>
<svg style="left:1278.5px;top:128.5px" width="7" height="4" viewBox="0 0 7 4"><path d="M0 0 H7 L3.5 4 Z" fill="#e8ecf4"/></svg>
<div class="abs" style="left:247.2px;top:139.9px;width:1041.5px;height:355.7px;background:#f0f0f0;"></div>
<div class="abs" style="left:247.2px;top:139.9px;width:1041.5px;height:3.9px;background:#808080;"></div>
<div class="abs" style="left:250.3px;top:142.8px;width:1035px;height:1px;background:#6a6a6a;"></div>
<div class="abs" style="left:247.2px;top:139.9px;width:1.4px;height:355.7px;background:#6a7488;"></div>
<div class="abs" style="left:248.6px;top:139.9px;width:1.8px;height:354px;background:#8c8c8c;"></div>
<div class="abs" style="left:250.3px;top:142.8px;width:1.2px;height:348.5px;background:#6a6a6a;"></div>
<div class="abs" style="left:1283.8px;top:143.8px;width:0.9px;height:347.5px;background:#a8a8a8;"></div>
<div class="abs" style="left:1284.7px;top:142.8px;width:1px;height:349.5px;background:#ffffff;"></div>
<div class="abs" style="left:1285.7px;top:141.8px;width:0.9px;height:351.7px;background:#b8b8b8;"></div>
<div class="abs" style="left:1286.6px;top:140.5px;width:2.1px;height:355.1px;background:#e9edf5;"></div>
<div class="abs" style="left:251.5px;top:490.9px;width:1033.2px;height:0.9px;background:#a0a0a0;"></div>
<div class="abs" style="left:250.4px;top:491.8px;width:1035.3px;height:1.1px;background:#ffffff;"></div>
<div class="abs" style="left:249.5px;top:492.9px;width:1037.1px;height:0.9px;background:#bcbcbc;"></div>
<div class="abs" style="left:248.6px;top:493.8px;width:1040.1px;height:1.8px;background:#e9edf5;"></div>
<div class="t" style="left:258.8px;top:147.8px;font-size:8.5px;color:#000;letter-spacing:-0.045px;">Settings</div>
<div class="t" style="left:299.2px;top:149.2px;font-size:8.5px;color:#000;letter-spacing:0.208px;">Scan</div>
<div class="t" style="left:332.8px;top:149.2px;font-size:8.5px;color:#000;letter-spacing:-0.360px;">Memory</div>
<div class="t" style="left:371.7px;top:149.2px;font-size:8.5px;color:#000;letter-spacing:-0.129px;">Faults</div>
<div class="t" style="left:405.5px;top:149.2px;font-size:8.5px;color:#000;letter-spacing:0.057px;">Scan Sets</div>
<div class="t" style="left:453.8px;top:149.2px;font-size:8.5px;color:#000;letter-spacing:-0.012px;">Access Control</div>
<div class="abs" style="left:294.09999999999997px;top:146px;width:1.5px;height:14px;background:#6e6e6e;"></div>
<div class="abs" style="left:326.09999999999997px;top:147.5px;width:1.5px;height:12.5px;background:#6e6e6e;"></div>
<div class="abs" style="left:365.59999999999997px;top:147.5px;width:1.5px;height:12.5px;background:#6e6e6e;"></div>
<div class="abs" style="left:399.09999999999997px;top:147.5px;width:1.5px;height:12.5px;background:#6e6e6e;"></div>
<div class="abs" style="left:447.7px;top:147.5px;width:1.5px;height:12.5px;background:#6e6e6e;"></div>
<div class="abs" style="left:513.9px;top:147.5px;width:1.5px;height:12.5px;background:#6e6e6e;"></div>
<div class="abs" style="left:253px;top:146px;width:41.5px;height:1px;background:#f8f8f8;"></div>
<div class="abs" style="left:253px;top:146px;width:1px;height:15px;background:#f8f8f8;"></div>
<div class="abs" style="left:257px;top:163.2px;width:1022.5px;height:324.6px;background:#ffffff;"></div>
<div class="abs" style="left:257px;top:163.2px;width:259.5px;height:324.6px;background:#f0f0f0;"></div>
<div class="abs" style="left:257px;top:163.2px;width:1022.5px;height:13.62px;background:#f0f0f0;"></div>
<div class="abs" style="left:257px;top:163px;width:1022.5px;height:1.35px;background:#505050;"></div>
<div class="abs" style="left:257px;top:177px;width:1022.5px;height:1.35px;background:#505050;"></div>
<div class="abs" style="left:257px;top:190px;width:259.5px;height:1.35px;background:#505050;"></div>
<div class="abs dot" style="top:190px"></div>
<div class="abs" style="left:257px;top:204px;width:259.5px;height:1.35px;background:#505050;"></div>
<div class="abs dot" style="top:204px"></div>
<div class="abs" style="left:257px;top:218px;width:259.5px;height:1.35px;background:#505050;"></div>
<div class="abs dot" style="top:218px"></div>
<div class="abs" style="left:257px;top:231px;width:259.5px;height:1.35px;background:#505050;"></div>
<div class="abs dot" style="top:231px"></div>
<div class="abs" style="left:257px;top:245px;width:259.5px;height:1.35px;background:#505050;"></div>
<div class="abs dot" style="top:245px"></div>
<div class="abs" style="left:257px;top:259px;width:259.5px;height:1.35px;background:#505050;"></div>
<div class="abs dot" style="top:259px"></div>
<div class="abs" style="left:257px;top:272px;width:259.5px;height:1.35px;background:#505050;"></div>
<div class="abs dot" style="top:272px"></div>
<div class="abs" style="left:257px;top:286px;width:259.5px;height:1.35px;background:#505050;"></div>
<div class="abs dot" style="top:286px"></div>
<div class="abs" style="left:257px;top:299px;width:259.5px;height:1.35px;background:#505050;"></div>
<div class="abs dot" style="top:299px"></div>
<div class="abs" style="left:257px;top:313px;width:259.5px;height:1.35px;background:#505050;"></div>
<div class="abs dot" style="top:313px"></div>
<div class="abs" style="left:257px;top:327px;width:259.5px;height:1.35px;background:#505050;"></div>
<div class="abs dot" style="top:327px"></div>
<div class="abs" style="left:257px;top:340px;width:259.5px;height:1.35px;background:#505050;"></div>
<div class="abs dot" style="top:340px"></div>
<div class="abs" style="left:257px;top:354px;width:259.5px;height:1.35px;background:#505050;"></div>
<div class="abs dot" style="top:354px"></div>
<div class="abs" style="left:257px;top:368px;width:259.5px;height:1.35px;background:#505050;"></div>
<div class="abs dot" style="top:368px"></div>
<div class="abs" style="left:257px;top:381px;width:259.5px;height:1.35px;background:#505050;"></div>
<div class="abs dot" style="top:381px"></div>
<div class="abs" style="left:257px;top:395px;width:259.5px;height:1.35px;background:#505050;"></div>
<div class="abs dot" style="top:395px"></div>
<div class="abs" style="left:257px;top:408px;width:259.5px;height:1.35px;background:#505050;"></div>
<div class="abs dot" style="top:408px"></div>
<div class="abs" style="left:257px;top:422px;width:259.5px;height:1.35px;background:#505050;"></div>
<div class="abs dot" style="top:422px"></div>
<div class="abs" style="left:257px;top:436px;width:259.5px;height:1.35px;background:#505050;"></div>
<div class="abs dot" style="top:436px"></div>
<div class="abs" style="left:257px;top:449px;width:259.5px;height:1.35px;background:#505050;"></div>
<div class="abs dot" style="top:449px"></div>
<div class="abs" style="left:257px;top:463px;width:259.5px;height:1.35px;background:#505050;"></div>
<div class="abs dot" style="top:463px"></div>
<div class="abs" style="left:257px;top:476px;width:259.5px;height:1.35px;background:#505050;"></div>
<div class="abs dot" style="top:476px"></div>
<div class="abs" style="left:257px;top:163.2px;width:1.3px;height:324.6px;background:#555;"></div>
<div class="abs" style="left:516px;top:163.2px;width:1.2px;height:324.6px;background:#555;"></div>
<div class="abs" style="left:1279px;top:163.2px;width:1px;height:14.62px;background:#555;"></div>
<div class="abs" style="left:1279px;top:176.82px;width:0px;height:300.18px;background:transparent;border-left:1px dotted #777;width:0"></div>
<div class="t" style="left:361.7px;top:166.5px;font-size:8.6px;color:#000;font-weight:bold;letter-spacing:0.349px;">Parameters</div>
<div class="t" style="left:882.5px;top:166.5px;font-size:8.6px;color:#000;font-weight:bold;letter-spacing:0.549px;">Values</div>
<div class="t" style="left:259.7px;top:180.9px;font-size:8.55px;color:#000;-webkit-text-stroke:.2px #000;">Passwords</div>
<div class="t" style="left:518.5px;top:180.9px;font-size:8.55px;color:#000;-webkit-text-stroke:.2px #000;">Enabled</div>
<div class="t" style="left:259.7px;top:194.5px;font-size:8.55px;color:#000;-webkit-text-stroke:.2px #000;">Stop-Mode I/O Scanning</div>
<div class="t" style="left:518.5px;top:194.5px;font-size:8.55px;color:#000;-webkit-text-stroke:.2px #000;">Disabled</div>
<div class="t" style="left:259.7px;top:208.1px;font-size:8.55px;color:#000;-webkit-text-stroke:.2px #000;">Watchdog Timer (ms)</div>
<div class="t" style="left:518.5px;top:208.1px;font-size:8.55px;color:#000;-webkit-text-stroke:.2px #000;">200</div>
<div class="t" style="left:259.7px;top:221.7px;font-size:8.55px;color:#000;-webkit-text-stroke:.2px #000;">Logic/Configuration Power-up Source</div>
<div class="t" style="left:518.5px;top:221.7px;font-size:8.55px;color:#000;-webkit-text-stroke:.2px #000;">Always RAM</div>
<div class="t" style="left:259.7px;top:235.4px;font-size:8.55px;color:#000;-webkit-text-stroke:.2px #000;">Data Power-up Source</div>
<div class="t" style="left:518.5px;top:235.4px;font-size:8.55px;color:#000;-webkit-text-stroke:.2px #000;">Always RAM</div>
<div class="t" style="left:259.7px;top:249.0px;font-size:8.55px;color:#000;-webkit-text-stroke:.2px #000;">Power-up Mode</div>
<div class="t" style="left:518.5px;top:249.0px;font-size:8.55px;color:#000;-webkit-text-stroke:.2px #000;">Last</div>
<div class="t" style="left:259.7px;top:262.6px;font-size:8.55px;color:#000;-webkit-text-stroke:.2px #000;">Modbus Address Space Mapping Type</div>
<div class="t" style="left:518.5px;top:262.6px;font-size:8.55px;color:#000;-webkit-text-stroke:.2px #000;">Disabled</div>

<div class="abs" style="left:1291.5px;top:122.6px;width:240.5px;height:373px;background:#eef1f7;"></div>
<div class="abs" style="left:1291.5px;top:122.6px;width:240.5px;height:16.3px;background:#fff29d;"></div>
<div class="abs" style="left:1292.5px;top:138.9px;width:238.5px;height:1px;background:#a8a48a;"></div>
<div class="t" style="left:1296.3px;top:125.3px;font-size:9.5px;color:#1e1e1e;letter-spacing:-0.104px;">Toolchest</div>
<svg style="left:1492.6px;top:129.4px" width="6" height="3.4" viewBox="0 0 6 3.4"><path d="M0 0 H6 L3 3.4 Z" fill="#6a6012"/></svg>
<svg style="left:1505.3999999999999px;top:126.39999999999999px" width="6" height="9" viewBox="0 0 6 9"><path d="M1.8 .5 H4.6 M1.8 .5 V4.8 M.4 4.8 H5.8 M3.2 4.8 V8.6" stroke="#6a6012" stroke-width=".9" fill="none"/><rect x="3.8" y=".5" width=".9" height="4.3" fill="#6a6012"/></svg>
<svg style="left:1518.3999999999999px;top:127.39999999999999px" width="6.4" height="6.4" viewBox="0 0 6.4 6.4"><path d="M.4 .4 L6 6 M6 .4 L.4 6" stroke="#6a6012" stroke-width="1" fill="none"/></svg>
<div class="abs" style="left:1292.5px;top:139.9px;width:238.5px;height:354.6px;background:#f0f0f0;"></div>
<div class="abs" style="left:1297.5px;top:143.5px;width:228px;height:16.5px;background:#ffffff;border:1px solid #828282;border-right-color:#e0e0e0;border-bottom-color:#e0e0e0"></div>
<div class="abs" style="left:1298.5px;top:144.5px;width:226px;height:14.5px;background:transparent;border-top:1px solid #b0b0b0;border-left:1px solid #b0b0b0"></div>
<div class="abs" style="left:1512.5px;top:145px;width:12px;height:13.5px;background:#e8e8e8;border:1px solid #fff;border-right-color:#707070;border-bottom-color:#707070"></div>
<svg style="left:1515.5px;top:150px" width="6" height="3.5" viewBox="0 0 6 3.5"><path d="M0 0 H6 L3 3.5 Z" fill="#000"/></svg>
<svg style="left:1305px;top:145.5px" width="13" height="12" viewBox="0 0 13 12"><path d="M1 3.5 H4.2 L5 2 H8 V8 H1 Z" fill="#b8b060" stroke="#333" stroke-width=".8"/><path d="M3 5.5 H6.2 L7 4 H10 V10 H3 Z" fill="#d8d070" stroke="#333" stroke-width=".8"/><path d="M5 7.5 H8.2 L9 6.2 H12.2 V11.5 H5 Z" fill="#f4f080" stroke="#333" stroke-width=".8"/></svg>
<div class="t" style="left:1320.3px;top:146.4px;font-size:9.5px;color:#000;font-weight:bold;">Profinet Devices</div>
<div class="abs" style="left:1297.5px;top:160.5px;width:218.5px;height:296px;background:#ffffff;"></div>
<svg style="left:1297px;top:160.5px" width="40" height="296" viewBox="0 0 40 296"><path stroke="#a0a0a0" stroke-width="1" stroke-dasharray="1 1" fill="none" d="M6.5 0 V98.5 M21.5 0 V85.5 M21.5 104 V277.5 M10 98.5 H19"/></svg>
<div class="abs" style="left:1297.5px;top:160.5px;width:218.5px;height:296px;overflow:hidden">
<div class="abs" style="left:25.0px;top:8.8px;width:4.5px;height:0px;background:transparent;border-top:1px dotted #a0a0a0"></div>
<svg style="left:17px;top:5px" width="7" height="7" viewBox="0 0 7 7" shape-rendering="crispEdges"><rect x=".5" y=".5" width="6" height="6" fill="#fff" stroke="#979797" stroke-width="1"/><path d="M2 3.5 H5" stroke="#000" stroke-width="1"/><path d="M3.5 2 V5" stroke="#000" stroke-width="1"/></svg>
<svg style="left:29.5px;top:2.600000000000011px" width="12" height="12.4" viewBox="0 0 12 12.4"><rect x="0" y=".3" width="12" height="12" fill="#0c0c0c"/><rect x="2.2" y=".3" width="7.6" height="5.2" fill="#ffffff"/><rect x="2.2" y="0" width="7.6" height=".7" fill="#d05050"/><rect x="3" y="8" width="6" height="4.3" fill="#1a1a1a"/><rect x="6.6" y="8.8" width="1.6" height="2.8" fill="#b0b0b0"/><rect x="1.5" y="11.9" width="9" height=".6" fill="#c06060"/></svg>
<div class="t" style="left:45.8px;top:4.4px;font-size:8.55px;color:#000;">GENIUSGateway 20190219-V2_3-GE</div>
<div class="abs" style="left:25.0px;top:21.6px;width:4.5px;height:0px;background:transparent;border-top:1px dotted #a0a0a0"></div>
<svg style="left:17px;top:18px" width="7" height="7" viewBox="0 0 7 7" shape-rendering="crispEdges"><rect x=".5" y=".5" width="6" height="6" fill="#fff" stroke="#979797" stroke-width="1"/><path d="M2 3.5 H5" stroke="#000" stroke-width="1"/><path d="M3.5 2 V5" stroke="#000" stroke-width="1"/></svg>
<svg style="left:29.5px;top:15.400000000000023px" width="12" height="12.4" viewBox="0 0 12 12.4"><rect x="0" y=".3" width="12" height="12" fill="#0c0c0c"/><rect x="2.2" y=".3" width="7.6" height="5.2" fill="#ffffff"/><rect x="2.2" y="0" width="7.6" height=".7" fill="#d05050"/><rect x="3" y="8" width="6" height="4.3" fill="#1a1a1a"/><rect x="6.6" y="8.8" width="1.6" height="2.8" fill="#b0b0b0"/><rect x="1.5" y="11.9" width="9" height=".6" fill="#c06060"/></svg>
<div class="t" style="left:45.8px;top:17.2px;font-size:8.55px;color:#000;">GLM082 20200124-V2_3-EMR</div>
<div class="abs" style="left:25.0px;top:34.4px;width:4.5px;height:0px;background:transparent;border-top:1px dotted #a0a0a0"></div>
<svg style="left:17px;top:31px" width="7" height="7" viewBox="0 0 7 7" shape-rendering="crispEdges"><rect x=".5" y=".5" width="6" height="6" fill="#fff" stroke="#979797" stroke-width="1"/><path d="M2 3.5 H5" stroke="#000" stroke-width="1"/><path d="M3.5 2 V5" stroke="#000" stroke-width="1"/></svg>
<svg style="left:29.5px;top:28.200000000000006px" width="12" height="12.4" viewBox="0 0 12 12.4"><rect x="0" y=".3" width="12" height="12" fill="#0c0c0c"/><rect x="2.2" y=".3" width="7.6" height="5.2" fill="#ffffff"/><rect x="2.2" y="0" width="7.6" height=".7" fill="#d05050"/><rect x="3" y="8" width="6" height="4.3" fill="#1a1a1a"/><rect x="6.6" y="8.8" width="1.6" height="2.8" fill="#b0b0b0"/><rect x="1.5" y="11.9" width="9" height=".6" fill="#c06060"/></svg>
<div class="t" style="left:45.8px;top:30.0px;font-size:8.55px;color:#000;">EPXPNS001 20160803-V2_3-GE</div>
<div class="abs" style="left:25.0px;top:47.2px;width:4.5px;height:0px;background:transparent;border-top:1px dotted #a0a0a0"></div>
<svg style="left:17px;top:44px" width="7" height="7" viewBox="0 0 7 7" shape-rendering="crispEdges"><rect x=".5" y=".5" width="6" height="6" fill="#fff" stroke="#979797" stroke-width="1"/><path d="M2 3.5 H5" stroke="#000" stroke-width="1"/><path d="M3.5 2 V5" stroke="#000" stroke-width="1"/></svg>
<svg style="left:29.5px;top:41.000000000000014px" width="12" height="12.4" viewBox="0 0 12 12.4"><rect x="0" y=".3" width="12" height="12" fill="#0c0c0c"/><rect x="2.2" y=".3" width="7.6" height="5.2" fill="#ffffff"/><rect x="2.2" y="0" width="7.6" height=".7" fill="#d05050"/><rect x="3" y="8" width="6" height="4.3" fill="#1a1a1a"/><rect x="6.6" y="8.8" width="1.6" height="2.8" fill="#b0b0b0"/><rect x="1.5" y="11.9" width="9" height=".6" fill="#c06060"/></svg>
<div class="t" style="left:45.8px;top:42.8px;font-size:8.55px;color:#000;">RX3iCEP 20170117-V2_3-GEIP</div>
<div class="abs" style="left:25.0px;top:60.0px;width:4.5px;height:0px;background:transparent;border-top:1px dotted #a0a0a0"></div>
<svg style="left:17px;top:56px" width="7" height="7" viewBox="0 0 7 7" shape-rendering="crispEdges"><rect x=".5" y=".5" width="6" height="6" fill="#fff" stroke="#979797" stroke-width="1"/><path d="M2 3.5 H5" stroke="#000" stroke-width="1"/><path d="M3.5 2 V5" stroke="#000" stroke-width="1"/></svg>
<svg style="left:29.5px;top:53.8px" width="12" height="12.4" viewBox="0 0 12 12.4"><rect x="0" y=".3" width="12" height="12" fill="#0c0c0c"/><rect x="2.2" y=".3" width="7.6" height="5.2" fill="#ffffff"/><rect x="2.2" y="0" width="7.6" height=".7" fill="#d05050"/><rect x="3" y="8" width="6" height="4.3" fill="#1a1a1a"/><rect x="6.6" y="8.8" width="1.6" height="2.8" fill="#b0b0b0"/><rect x="1.5" y="11.9" width="9" height=".6" fill="#c06060"/></svg>
<div class="t" style="left:45.8px;top:55.6px;font-size:8.55px;color:#000;">GLM104 20200124-V2_3-EMR</div>
<div class="abs" style="left:25.0px;top:72.8px;width:4.5px;height:0px;background:transparent;border-top:1px dotted #a0a0a0"></div>
<svg style="left:17px;top:69px" width="7" height="7" viewBox="0 0 7 7" shape-rendering="crispEdges"><rect x=".5" y=".5" width="6" height="6" fill="#fff" stroke="#979797" stroke-width="1"/><path d="M2 3.5 H5" stroke="#000" stroke-width="1"/><path d="M3.5 2 V5" stroke="#000" stroke-width="1"/></svg>
<svg style="left:29.5px;top:66.60000000000001px" width="12" height="12.4" viewBox="0 0 12 12.4"><rect x="0" y=".3" width="12" height="12" fill="#0c0c0c"/><rect x="2.2" y=".3" width="7.6" height="5.2" fill="#ffffff"/><rect x="2.2" y="0" width="7.6" height=".7" fill="#d05050"/><rect x="3" y="8" width="6" height="4.3" fill="#1a1a1a"/><rect x="6.6" y="8.8" width="1.6" height="2.8" fill="#b0b0b0"/><rect x="1.5" y="11.9" width="9" height=".6" fill="#c06060"/></svg>
<div class="t" style="left:45.8px;top:68.4px;font-size:8.55px;color:#000;">GLM064 20200124-V2_3-EMR</div>
<div class="abs" style="left:25.0px;top:85.6px;width:4.5px;height:0px;background:transparent;border-top:1px dotted #a0a0a0"></div>
<svg style="left:17px;top:82px" width="7" height="7" viewBox="0 0 7 7" shape-rendering="crispEdges"><rect x=".5" y=".5" width="6" height="6" fill="#fff" stroke="#979797" stroke-width="1"/><path d="M2 3.5 H5" stroke="#000" stroke-width="1"/><path d="M3.5 2 V5" stroke="#000" stroke-width="1"/></svg>
<svg style="left:29.5px;top:79.40000000000002px" width="12" height="12.4" viewBox="0 0 12 12.4"><rect x="0" y=".3" width="12" height="12" fill="#0c0c0c"/><rect x="2.2" y=".3" width="7.6" height="5.2" fill="#ffffff"/><rect x="2.2" y="0" width="7.6" height=".7" fill="#d05050"/><rect x="3" y="8" width="6" height="4.3" fill="#1a1a1a"/><rect x="6.6" y="8.8" width="1.6" height="2.8" fill="#b0b0b0"/><rect x="1.5" y="11.9" width="9" height=".6" fill="#c06060"/></svg>
<div class="t" style="left:45.8px;top:81.2px;font-size:8.55px;color:#000;">VersaMaxPNS 20130426-V2_3-EMRIP</div>
<svg style="left:3px;top:95px" width="7" height="7" viewBox="0 0 7 7" shape-rendering="crispEdges"><rect x=".5" y=".5" width="6" height="6" fill="#fff" stroke="#979797" stroke-width="1"/><path d="M2 3.5 H5" stroke="#000" stroke-width="1"/></svg>
<svg style="left:14.0px;top:93.90000000000003px" width="10" height="9" viewBox="0 0 10 9"><path d="M.6 2 H3.5 L4.5 .8 H7 L7.5 2 H9.4 V8.4 H.6 Z" fill="#f4f090" stroke="#555" stroke-width=".9"/></svg>
<div class="t" style="left:30.0px;top:94.0px;font-size:8.55px;color:#000;letter-spacing:-0.041px;">Intelligent Platforms, LLC</div>
<div class="abs" style="left:25.0px;top:111.2px;width:4.5px;height:0px;background:transparent;border-top:1px dotted #a0a0a0"></div>
<svg style="left:17px;top:108px" width="7" height="7" viewBox="0 0 7 7" shape-rendering="crispEdges"><rect x=".5" y=".5" width="6" height="6" fill="#fff" stroke="#979797" stroke-width="1"/><path d="M2 3.5 H5" stroke="#000" stroke-width="1"/><path d="M3.5 2 V5" stroke="#000" stroke-width="1"/></svg>
<svg style="left:29.5px;top:105.00000000000004px" width="12" height="12.4" viewBox="0 0 12 12.4"><rect x="0" y=".3" width="12" height="12" fill="#0c0c0c"/><rect x="2.2" y=".3" width="7.6" height="5.2" fill="#ffffff"/><rect x="2.2" y="0" width="7.6" height=".7" fill="#d05050"/><rect x="3" y="8" width="6" height="4.3" fill="#1a1a1a"/><rect x="6.6" y="8.8" width="1.6" height="2.8" fill="#b0b0b0"/><rect x="1.5" y="11.9" width="9" height=".6" fill="#c06060"/></svg>
<div class="t" style="left:45.8px;top:106.8px;font-size:8.55px;color:#000;">RSTi-OM 20210101-V2_33-IntelligentPlatforms</div>
<div class="abs" style="left:25.0px;top:124.0px;width:4.5px;height:0px;background:transparent;border-top:1px dotted #a0a0a0"></div>
<svg style="left:17px;top:120px" width="7" height="7" viewBox="0 0 7 7" shape-rendering="crispEdges"><rect x=".5" y=".5" width="6" height="6" fill="#fff" stroke="#979797" stroke-width="1"/><path d="M2 3.5 H5" stroke="#000" stroke-width="1"/><path d="M3.5 2 V5" stroke="#000" stroke-width="1"/></svg>
<svg style="left:29.5px;top:117.8px" width="12" height="12.4" viewBox="0 0 12 12.4"><rect x="0" y=".3" width="12" height="12" fill="#0c0c0c"/><rect x="2.2" y=".3" width="7.6" height="5.2" fill="#ffffff"/><rect x="2.2" y="0" width="7.6" height=".7" fill="#d05050"/><rect x="3" y="8" width="6" height="4.3" fill="#1a1a1a"/><rect x="6.6" y="8.8" width="1.6" height="2.8" fill="#b0b0b0"/><rect x="1.5" y="11.9" width="9" height=".6" fill="#c06060"/></svg>
<div class="t" style="left:45.8px;top:119.6px;font-size:8.55px;color:#000;">RSTi-OM 20210223-V2_33-IntelligentPlatforms</div>
<div class="abs" style="left:25.0px;top:136.8px;width:4.5px;height:0px;background:transparent;border-top:1px dotted #a0a0a0"></div>
<svg style="left:17px;top:133px" width="7" height="7" viewBox="0 0 7 7" shape-rendering="crispEdges"><rect x=".5" y=".5" width="6" height="6" fill="#fff" stroke="#979797" stroke-width="1"/><path d="M2 3.5 H5" stroke="#000" stroke-width="1"/><path d="M3.5 2 V5" stroke="#000" stroke-width="1"/></svg>
<svg style="left:29.5px;top:130.60000000000002px" width="12" height="12.4" viewBox="0 0 12 12.4"><rect x="0" y=".3" width="12" height="12" fill="#0c0c0c"/><rect x="2.2" y=".3" width="7.6" height="5.2" fill="#ffffff"/><rect x="2.2" y="0" width="7.6" height=".7" fill="#d05050"/><rect x="3" y="8" width="6" height="4.3" fill="#1a1a1a"/><rect x="6.6" y="8.8" width="1.6" height="2.8" fill="#b0b0b0"/><rect x="1.5" y="11.9" width="9" height=".6" fill="#c06060"/></svg>
<div class="t" style="left:45.8px;top:132.4px;font-size:8.55px;color:#000;">VersaMaxPNS 20130426-V2_3-IntelligentPlatforms</div>
<div class="abs" style="left:25.0px;top:149.6px;width:4.5px;height:0px;background:transparent;border-top:1px dotted #a0a0a0"></div>
<svg style="left:17px;top:146px" width="7" height="7" viewBox="0 0 7 7" shape-rendering="crispEdges"><rect x=".5" y=".5" width="6" height="6" fill="#fff" stroke="#979797" stroke-width="1"/><path d="M2 3.5 H5" stroke="#000" stroke-width="1"/><path d="M3.5 2 V5" stroke="#000" stroke-width="1"/></svg>
<svg style="left:29.5px;top:143.40000000000003px" width="12" height="12.4" viewBox="0 0 12 12.4"><rect x="0" y=".3" width="12" height="12" fill="#0c0c0c"/><rect x="2.2" y=".3" width="7.6" height="5.2" fill="#ffffff"/><rect x="2.2" y="0" width="7.6" height=".7" fill="#d05050"/><rect x="3" y="8" width="6" height="4.3" fill="#1a1a1a"/><rect x="6.6" y="8.8" width="1.6" height="2.8" fill="#b0b0b0"/><rect x="1.5" y="11.9" width="9" height=".6" fill="#c06060"/></svg>
<div class="t" style="left:45.8px;top:145.2px;font-size:8.55px;color:#000;">EPXPNS001 20211103-V2_3-IntelligentPlatforms</div>
<div class="abs" style="left:25.0px;top:162.4px;width:4.5px;height:0px;background:transparent;border-top:1px dotted #a0a0a0"></div>
<svg style="left:17px;top:159px" width="7" height="7" viewBox="0 0 7 7" shape-rendering="crispEdges"><rect x=".5" y=".5" width="6" height="6" fill="#fff" stroke="#979797" stroke-width="1"/><path d="M2 3.5 H5" stroke="#000" stroke-width="1"/><path d="M3.5 2 V5" stroke="#000" stroke-width="1"/></svg>
<svg style="left:29.5px;top:156.20000000000005px" width="12" height="12.4" viewBox="0 0 12 12.4"><rect x="0" y=".3" width="12" height="12" fill="#0c0c0c"/><rect x="2.2" y=".3" width="7.6" height="5.2" fill="#ffffff"/><rect x="2.2" y="0" width="7.6" height=".7" fill="#d05050"/><rect x="3" y="8" width="6" height="4.3" fill="#1a1a1a"/><rect x="6.6" y="8.8" width="1.6" height="2.8" fill="#b0b0b0"/><rect x="1.5" y="11.9" width="9" height=".6" fill="#c06060"/></svg>
<div class="t" style="left:45.8px;top:158.0px;font-size:8.55px;color:#000;">PAC8000PNS 20170731-V2_3-IntelligentPlatforms</div>
<div class="abs" style="left:25.0px;top:175.2px;width:4.5px;height:0px;background:transparent;border-top:1px dotted #a0a0a0"></div>
<svg style="left:17px;top:172px" width="7" height="7" viewBox="0 0 7 7" shape-rendering="crispEdges"><rect x=".5" y=".5" width="6" height="6" fill="#fff" stroke="#979797" stroke-width="1"/><path d="M2 3.5 H5" stroke="#000" stroke-width="1"/><path d="M3.5 2 V5" stroke="#000" stroke-width="1"/></svg>
<svg style="left:29.5px;top:169.00000000000006px" width="12" height="12.4" viewBox="0 0 12 12.4"><rect x="0" y=".3" width="12" height="12" fill="#0c0c0c"/><rect x="2.2" y=".3" width="7.6" height="5.2" fill="#ffffff"/><rect x="2.2" y="0" width="7.6" height=".7" fill="#d05050"/><rect x="3" y="8" width="6" height="4.3" fill="#1a1a1a"/><rect x="6.6" y="8.8" width="1.6" height="2.8" fill="#b0b0b0"/><rect x="1.5" y="11.9" width="9" height=".6" fill="#c06060"/></svg>
<div class="t" style="left:45.8px;top:170.8px;font-size:8.55px;color:#000;">VersaMax IP PNS-V3_2 20141121-V2_25-GEIP</div>
<div class="abs" style="left:25.0px;top:188.0px;width:4.5px;height:0px;background:transparent;border-top:1px dotted #a0a0a0"></div>
<svg style="left:17px;top:184px" width="7" height="7" viewBox="0 0 7 7" shape-rendering="crispEdges"><rect x=".5" y=".5" width="6" height="6" fill="#fff" stroke="#979797" stroke-width="1"/><path d="M2 3.5 H5" stroke="#000" stroke-width="1"/><path d="M3.5 2 V5" stroke="#000" stroke-width="1"/></svg>
<svg style="left:29.5px;top:181.8px" width="12" height="12.4" viewBox="0 0 12 12.4"><rect x="0" y=".3" width="12" height="12" fill="#0c0c0c"/><rect x="2.2" y=".3" width="7.6" height="5.2" fill="#ffffff"/><rect x="2.2" y="0" width="7.6" height=".7" fill="#d05050"/><rect x="3" y="8" width="6" height="4.3" fill="#1a1a1a"/><rect x="6.6" y="8.8" width="1.6" height="2.8" fill="#b0b0b0"/><rect x="1.5" y="11.9" width="9" height=".6" fill="#c06060"/></svg>
<div class="t" style="left:45.8px;top:183.6px;font-size:8.55px;color:#000;">RSTi-STXPNS 20131112-V2_0-GEIP</div>
<div class="abs" style="left:25.0px;top:200.8px;width:4.5px;height:0px;background:transparent;border-top:1px dotted #a0a0a0"></div>
<svg style="left:17px;top:197px" width="7" height="7" viewBox="0 0 7 7" shape-rendering="crispEdges"><rect x=".5" y=".5" width="6" height="6" fill="#fff" stroke="#979797" stroke-width="1"/><path d="M2 3.5 H5" stroke="#000" stroke-width="1"/><path d="M3.5 2 V5" stroke="#000" stroke-width="1"/></svg>
<svg style="left:29.5px;top:194.60000000000002px" width="12" height="12.4" viewBox="0 0 12 12.4"><rect x="0" y=".3" width="12" height="12" fill="#0c0c0c"/><rect x="2.2" y=".3" width="7.6" height="5.2" fill="#ffffff"/><rect x="2.2" y="0" width="7.6" height=".7" fill="#d05050"/><rect x="3" y="8" width="6" height="4.3" fill="#1a1a1a"/><rect x="6.6" y="8.8" width="1.6" height="2.8" fill="#b0b0b0"/><rect x="1.5" y="11.9" width="9" height=".6" fill="#c06060"/></svg>
<div class="t" style="left:45.8px;top:196.4px;font-size:8.55px;color:#000;">RX3iPNS 20191010-V2_3-IntelligentPlatforms</div>
<div class="abs" style="left:25.0px;top:213.6px;width:4.5px;height:0px;background:transparent;border-top:1px dotted #a0a0a0"></div>
<svg style="left:17px;top:210px" width="7" height="7" viewBox="0 0 7 7" shape-rendering="crispEdges"><rect x=".5" y=".5" width="6" height="6" fill="#fff" stroke="#979797" stroke-width="1"/><path d="M2 3.5 H5" stroke="#000" stroke-width="1"/><path d="M3.5 2 V5" stroke="#000" stroke-width="1"/></svg>
<svg style="left:29.5px;top:207.40000000000003px" width="12" height="12.4" viewBox="0 0 12 12.4"><rect x="0" y=".3" width="12" height="12" fill="#0c0c0c"/><rect x="2.2" y=".3" width="7.6" height="5.2" fill="#ffffff"/><rect x="2.2" y="0" width="7.6" height=".7" fill="#d05050"/><rect x="3" y="8" width="6" height="4.3" fill="#1a1a1a"/><rect x="6.6" y="8.8" width="1.6" height="2.8" fill="#b0b0b0"/><rect x="1.5" y="11.9" width="9" height=".6" fill="#c06060"/></svg>
<div class="t" style="left:45.8px;top:209.2px;font-size:8.55px;color:#000;">PACmotionVFD 20200113-V2_31-Intelligent Platforms</div>
<div class="abs" style="left:25.0px;top:226.4px;width:4.5px;height:0px;background:transparent;border-top:1px dotted #a0a0a0"></div>
<svg style="left:17px;top:223px" width="7" height="7" viewBox="0 0 7 7" shape-rendering="crispEdges"><rect x=".5" y=".5" width="6" height="6" fill="#fff" stroke="#979797" stroke-width="1"/><path d="M2 3.5 H5" stroke="#000" stroke-width="1"/><path d="M3.5 2 V5" stroke="#000" stroke-width="1"/></svg>
<svg style="left:29.5px;top:220.20000000000005px" width="12" height="12.4" viewBox="0 0 12 12.4"><rect x="0" y=".3" width="12" height="12" fill="#0c0c0c"/><rect x="2.2" y=".3" width="7.6" height="5.2" fill="#ffffff"/><rect x="2.2" y="0" width="7.6" height=".7" fill="#d05050"/><rect x="3" y="8" width="6" height="4.3" fill="#1a1a1a"/><rect x="6.6" y="8.8" width="1.6" height="2.8" fill="#b0b0b0"/><rect x="1.5" y="11.9" width="9" height=".6" fill="#c06060"/></svg>
<div class="t" style="left:45.8px;top:222.0px;font-size:8.55px;color:#000;">VersaPointPNS001 20130829-V2_2-GEIP</div>
<div class="abs" style="left:25.0px;top:239.2px;width:4.5px;height:0px;background:transparent;border-top:1px dotted #a0a0a0"></div>
<svg style="left:17px;top:236px" width="7" height="7" viewBox="0 0 7 7" shape-rendering="crispEdges"><rect x=".5" y=".5" width="6" height="6" fill="#fff" stroke="#979797" stroke-width="1"/><path d="M2 3.5 H5" stroke="#000" stroke-width="1"/><path d="M3.5 2 V5" stroke="#000" stroke-width="1"/></svg>
<svg style="left:29.5px;top:233.00000000000006px" width="12" height="12.4" viewBox="0 0 12 12.4"><rect x="0" y=".3" width="12" height="12" fill="#0c0c0c"/><rect x="2.2" y=".3" width="7.6" height="5.2" fill="#ffffff"/><rect x="2.2" y="0" width="7.6" height=".7" fill="#d05050"/><rect x="3" y="8" width="6" height="4.3" fill="#1a1a1a"/><rect x="6.6" y="8.8" width="1.6" height="2.8" fill="#b0b0b0"/><rect x="1.5" y="11.9" width="9" height=".6" fill="#c06060"/></svg>
<div class="t" style="left:45.8px;top:234.8px;font-size:8.55px;color:#000;">PACmotionVFD_SysRedundancy 20210511-V2_3</div>
<div class="abs" style="left:25.0px;top:252.0px;width:4.5px;height:0px;background:transparent;border-top:1px dotted #a0a0a0"></div>
<svg style="left:17px;top:248px" width="7" height="7" viewBox="0 0 7 7" shape-rendering="crispEdges"><rect x=".5" y=".5" width="6" height="6" fill="#fff" stroke="#979797" stroke-width="1"/><path d="M2 3.5 H5" stroke="#000" stroke-width="1"/><path d="M3.5 2 V5" stroke="#000" stroke-width="1"/></svg>
<svg style="left:29.5px;top:245.8px" width="12" height="12.4" viewBox="0 0 12 12.4"><rect x="0" y=".3" width="12" height="12" fill="#0c0c0c"/><rect x="2.2" y=".3" width="7.6" height="5.2" fill="#ffffff"/><rect x="2.2" y="0" width="7.6" height=".7" fill="#d05050"/><rect x="3" y="8" width="6" height="4.3" fill="#1a1a1a"/><rect x="6.6" y="8.8" width="1.6" height="2.8" fill="#b0b0b0"/><rect x="1.5" y="11.9" width="9" height=".6" fill="#c06060"/></svg>
<div class="t" style="left:45.8px;top:247.6px;font-size:8.55px;color:#000;">IC855-OC-P 20180826-V2_31-GEIP</div>
<div class="abs" style="left:25.0px;top:264.8px;width:4.5px;height:0px;background:transparent;border-top:1px dotted #a0a0a0"></div>
<svg style="left:17px;top:261px" width="7" height="7" viewBox="0 0 7 7" shape-rendering="crispEdges"><rect x=".5" y=".5" width="6" height="6" fill="#fff" stroke="#979797" stroke-width="1"/><path d="M2 3.5 H5" stroke="#000" stroke-width="1"/><path d="M3.5 2 V5" stroke="#000" stroke-width="1"/></svg>
<svg style="left:29.5px;top:258.6px" width="12" height="12.4" viewBox="0 0 12 12.4"><rect x="0" y=".3" width="12" height="12" fill="#0c0c0c"/><rect x="2.2" y=".3" width="7.6" height="5.2" fill="#ffffff"/><rect x="2.2" y="0" width="7.6" height=".7" fill="#d05050"/><rect x="3" y="8" width="6" height="4.3" fill="#1a1a1a"/><rect x="6.6" y="8.8" width="1.6" height="2.8" fill="#b0b0b0"/><rect x="1.5" y="11.9" width="9" height=".6" fill="#c06060"/></svg>
<div class="t" style="left:45.8px;top:260.4px;font-size:8.55px;color:#000;">VersaPointPNS002 20130829-V2_2-GEIP</div>
<div class="abs" style="left:25.0px;top:277.6px;width:4.5px;height:0px;background:transparent;border-top:1px dotted #a0a0a0"></div>
<svg style="left:17px;top:274px" width="7" height="7" viewBox="0 0 7 7" shape-rendering="crispEdges"><rect x=".5" y=".5" width="6" height="6" fill="#fff" stroke="#979797" stroke-width="1"/><path d="M2 3.5 H5" stroke="#000" stroke-width="1"/><path d="M3.5 2 V5" stroke="#000" stroke-width="1"/></svg>
<svg style="left:29.5px;top:271.40000000000003px" width="12" height="12.4" viewBox="0 0 12 12.4"><rect x="0" y=".3" width="12" height="12" fill="#0c0c0c"/><rect x="2.2" y=".3" width="7.6" height="5.2" fill="#ffffff"/><rect x="2.2" y="0" width="7.6" height=".7" fill="#d05050"/><rect x="3" y="8" width="6" height="4.3" fill="#1a1a1a"/><rect x="6.6" y="8.8" width="1.6" height="2.8" fill="#b0b0b0"/><rect x="1.5" y="11.9" width="9" height=".6" fill="#c06060"/></svg>
<div class="t" style="left:45.8px;top:273.2px;font-size:8.55px;color:#000;">RX3iCEP 20211111-V2_3-IntelligentPlatforms</div>
</div>
<div class="abs" style="left:1516px;top:160.5px;width:13.5px;height:296px;background:#f0f0f0;"></div>
<div class="abs" style="left:1516.5px;top:199px;width:11px;height:243px;background:#cdcdcd;"></div>
<svg style="left:1518.5px;top:167px" width="7" height="5" viewBox="0 0 7 5"><path stroke="#505050" stroke-width="1.3" fill="none" d="M.5 4.2 L3.5 1 L6.5 4.2"/></svg>
<svg style="left:1518.5px;top:447.5px" width="7" height="5" viewBox="0 0 7 5"><path stroke="#505050" stroke-width="1.3" fill="none" d="M.5 .8 L3.5 4 L6.5 .8"/></svg>
<div class="abs" style="left:1297.5px;top:456.5px;width:232px;height:13px;background:#f0f0f0;"></div>
<div class="abs" style="left:1310.3px;top:458px;width:121.3px;height:10.5px;background:#cdcdcd;"></div>
<svg style="left:1301px;top:459.5px" width="5" height="7" viewBox="0 0 5 7"><path stroke="#505050" stroke-width="1.3" fill="none" d="M4.2 .5 L1 3.5 L4.2 6.5"/></svg>
<svg style="left:1506.5px;top:459.5px" width="5" height="7" viewBox="0 0 5 7"><path stroke="#505050" stroke-width="1.3" fill="none" d="M.8 .5 L4 3.5 L.8 6.5"/></svg>
<div class="abs" style="left:1296px;top:476px;width:57.5px;height:17px;background:#f0f0f0;border:1px solid #fff;border-right-color:#696969;border-bottom-color:#696969;border-top:none"></div>
<div class="abs" style="left:1353.5px;top:476.5px;width:60.5px;height:14.5px;background:#f0f0f0;border:1px solid #696969;border-left-color:#fff;border-top-color:#fff"></div>
<svg style="left:1299.5px;top:478.5px" width="12" height="13" viewBox="0 0 12 13"><path d="M1.5 4 L4 1.5 H9.5 V10 L7 12.5 H1.5 Z" fill="#b4b03c" stroke="#222" stroke-width=".9"/><path d="M3 6.5 H7 M3 9 H7" stroke="#222" stroke-width=".9"/><path d="M7 12.5 V4 H1.5 M7 4 L9.5 1.5" stroke="#222" stroke-width=".7" fill="none"/></svg>
<div class="t" style="left:1317.6px;top:481.2px;font-size:8.6px;color:#000;letter-spacing:-0.169px;">Drawers</div>
<svg style="left:1358px;top:478px" width="13" height="13" viewBox="0 0 13 13"><circle cx="3" cy="3.5" r="1.8" fill="none" stroke="#222"/><circle cx="9.5" cy="2.5" r="1.8" fill="none" stroke="#222"/><path d="M4.8 3.3 L7.7 2.8 M3 5.3 V7 M9.5 4.3 V7" stroke="#222" stroke-width=".9"/><rect x="1" y="7" width="4.5" height="5" fill="#ddd" stroke="#222" stroke-width=".9"/><rect x="7.5" y="7" width="4.5" height="5" fill="#ddd" stroke="#222" stroke-width=".9"/></svg>
<div class="t" style="left:1375.9px;top:479.8px;font-size:8.6px;color:#000;letter-spacing:-0.096px;">Favorites</div>

<div class="abs" style="left:4px;top:498.5px;width:763px;height:160.5px;background:#4d6082;"></div>
<div class="abs" style="left:4px;top:498.5px;width:763px;height:1px;background:#6b80a5;"></div>
<div class="t" style="left:8.3px;top:502.1px;font-size:9.5px;color:#fff;letter-spacing:0.177px;">Companion</div>
<svg style="left:726.7px;top:504.9px" width="7" height="4" viewBox="0 0 7 4"><path d="M0 0 H7 L3.5 4 Z" fill="#fff"/></svg>
<svg style="left:739.7px;top:501.9px" width="7" height="9" viewBox="0 0 7 9"><path d="M2 .5 H5 M2 .5 V5 M4.6 .5 V5 M.5 5 H6.5 M3.5 5 V9" stroke="#fff" stroke-width="1.1" fill="none"/><rect x="4" y=".5" width="1" height="4.5" fill="#fff"/></svg>
<svg style="left:752.7px;top:502.9px" width="7" height="7" viewBox="0 0 7 7"><path d="M.5 .5 L6.5 6.5 M6.5 .5 L.5 6.5" stroke="#fff" stroke-width="1.5" fill="none"/></svg>
<div class="abs" style="left:6px;top:514.6px;width:760px;height:144.2px;background:#d8d0c8;"></div>
<div class="abs" style="left:6px;top:514.4px;width:760px;height:1.2px;background:#b9b3ae;"></div>
<div class="abs" style="left:766px;top:514.6px;width:1px;height:144px;background:#e4e9f3;"></div>
<svg style="left:14px;top:523.5px" width="10" height="9.5" viewBox="0 0 10 9.5"><path d="M.7 2.2 H2.8 L3.6 .8 H6.6 L7.2 2.2 H9.3 V8.8 H.7 Z" fill="#f6f08a" stroke="#4a4a20" stroke-width="1"/></svg>
<div class="t" style="left:29.2px;top:523.4px;font-size:11.6px;color:#0a0a80;font-weight:bold;letter-spacing:0.055px;-webkit-text-stroke:.2px #0a0a80;">Toolchest folder</div>
<svg style="left:734px;top:522px" width="24.5" height="14" viewBox="0 0 24.5 14"><ellipse cx="12.2" cy="7" rx="12" ry="6.8" fill="#07075e"/><ellipse cx="12.2" cy="7" rx="10.8" ry="5.6" fill="#1818c4"/><text x="9" y="11.3" font-family="Liberation Sans" font-weight="bold" font-size="11" fill="#f4ec70">?</text></svg>
<div class="t" style="left:12.5px;top:546.2px;font-size:10.2px;color:#2a2a2a;letter-spacing:0.333px;-webkit-text-stroke:.25px #2a2a2a;">Toolchest folders contains one or more</div>
<svg style="left:205px;top:543px" width="10" height="10" viewBox="0 0 10 10"><path d="M1 2 H4 M2.5 .5 V3.5" stroke="#333" stroke-width=".8"/><path d="M4 3 L7 .5 L9.5 3 Z" fill="#222"/><rect x="3.5" y="3.5" width="6" height="5.5" fill="#d01818"/><path d="M1.5 3.5 L3.5 5.5" stroke="#555" stroke-width=".8"/></svg>
<div class="t" style="left:219.8px;top:546.2px;font-size:10.2px;color:#2a2a2a;letter-spacing:0.284px;-webkit-text-stroke:.25px #2a2a2a;">fxClasses. You can expand and shrink folders and fxClasses by clicking</div>
<svg style="left:565.5px;top:547.2px" width="7" height="7" viewBox="0 0 7 7"><rect x=".5" y=".5" width="6" height="6" fill="#fff" stroke="#777"/><path d="M2 3.5 H5 M3.5 2 V5" stroke="#000" stroke-width=".9"/></svg>
<div class="t" style="left:576.4px;top:546.2px;font-size:10.2px;color:#2a2a2a;letter-spacing:0.041px;-webkit-text-stroke:.25px #2a2a2a;">and</div>
<svg style="left:597.8px;top:547.2px" width="7" height="7" viewBox="0 0 7 7"><rect x=".5" y=".5" width="6" height="6" fill="#fff" stroke="#777"/><path d="M2 3.5 H5" stroke="#000" stroke-width=".9"/></svg>
<div class="t" style="left:604.8px;top:546.2px;font-size:10.2px;color:#2a2a2a;letter-spacing:0.415px;-webkit-text-stroke:.25px #2a2a2a;">, respectively. To create an</div>
<div class="t" style="left:12.5px;top:558.5px;font-size:10.2px;color:#2a2a2a;letter-spacing:0.374px;-webkit-text-stroke:.25px #2a2a2a;">object based on an fxClass, drag the fxClass from the Toolchest into the appropriate editor window.</div>

<div class="abs" style="left:770px;top:498.5px;width:762px;height:160.5px;background:#4d6082;"></div>
<div class="abs" style="left:770px;top:498.5px;width:762px;height:1px;background:#6b80a5;"></div>
<div class="t" style="left:773.7px;top:502.1px;font-size:9.5px;color:#fff;letter-spacing:-0.075px;">Data Watch</div>
<svg style="left:1493.0px;top:504.9px" width="7" height="4" viewBox="0 0 7 4"><path d="M0 0 H7 L3.5 4 Z" fill="#fff"/></svg>
<svg style="left:1506.0px;top:501.9px" width="7" height="9" viewBox="0 0 7 9"><path d="M2 .5 H5 M2 .5 V5 M4.6 .5 V5 M.5 5 H6.5 M3.5 5 V9" stroke="#fff" stroke-width="1.1" fill="none"/><rect x="4" y=".5" width="1" height="4.5" fill="#fff"/></svg>
<svg style="left:1519.0px;top:502.9px" width="7" height="7" viewBox="0 0 7 7"><path d="M.5 .5 L6.5 6.5 M6.5 .5 L.5 6.5" stroke="#fff" stroke-width="1.5" fill="none"/></svg>
<div class="abs" style="left:771px;top:515px;width:760px;height:143.5px;background:#ffffff;"></div>
<div class="abs" style="left:771px;top:515px;width:760px;height:16px;background:#f0f0f0;"></div>
<div class="abs" style="left:771px;top:530.5px;width:760px;height:1.6px;background:#9c9c9c;"></div>
<div class="abs" style="left:1277.5px;top:515px;width:1.2px;height:29.5px;background:#b4b4b4;"></div>
<div class="abs" style="left:1371.5px;top:515px;width:1.2px;height:29.5px;background:#b4b4b4;"></div>
<div class="abs" style="left:1278.7px;top:515px;width:1px;height:16px;background:#fff;"></div>
<div class="abs" style="left:1372.7px;top:515px;width:1px;height:16px;background:#fff;"></div>
<div class="t" style="left:776.2px;top:519.8px;font-size:8.5px;color:#000;letter-spacing:-0.066px;">Variable Name</div>
<div class="t" style="left:1283.2px;top:519.8px;font-size:8.5px;color:#000;letter-spacing:-0.131px;">Address</div>
<div class="t" style="left:1379.7px;top:519.8px;font-size:8.5px;color:#000;letter-spacing:0.048px;">Value</div>
<div class="abs" style="left:771px;top:532px;width:760px;height:12px;background:#f0f0f0;"></div>
<div class="abs" style="left:771px;top:532px;width:36px;height:12px;background:#ffffff;"></div>
<div class="abs" style="left:771px;top:544px;width:760px;height:1px;background:#c4c4c4;"></div>
<div class="abs" style="left:779px;top:538px;width:8px;height:0px;background:transparent;border-top:1px dotted #aaa"></div>
<svg style="left:790.4px;top:535px" width="14" height="7" viewBox="0 0 14 7"><ellipse cx="3.6" cy="3.6" rx="3.2" ry="2.9" fill="#111"/><ellipse cx="10.4" cy="3.6" rx="3.2" ry="2.9" fill="#111"/><path d="M1.5 2.8 Q3.5 1.6 5.5 2.8 M8.5 2.8 Q10.5 1.6 12.5 2.8" stroke="#eee" stroke-width=".9" fill="none"/><path d="M6 2.2 H8" stroke="#111" stroke-width="1.2"/></svg>
<div class="abs" style="left:771px;top:635px;width:760px;height:23.5px;background:#e2e6f3;"></div>
<div class="abs" style="left:861px;top:639px;width:670px;height:1px;background:#7b82b4;"></div>
<svg style="left:771px;top:635px" width="95" height="20" viewBox="0 0 95 20"><path d="M0 4.3 H4 L14 16.5 Q15 17.5 17 17.5 H49 Q51.5 17.5 51.5 15 V4.3 Z" fill="#fff"/><path d="M0 4.5 H4 L14 16.5 Q15 17.5 17 17.5 H49 Q51.5 17.5 51.5 15 V4.5" fill="none" stroke="#8a8fa8" stroke-width=".9"/><path d="M51.5 4.5 H90 V15 Q90 17.5 87.5 17.5 H60 Q57 17.5 55.5 15.5 L51.8 11" fill="#e8ebf5" stroke="#7b82b4" stroke-width=".9"/></svg>
<div class="t" style="left:788.2px;top:640.6px;font-size:9.3px;color:#000;font-weight:bold;letter-spacing:-0.045px;">Static</div>
<div class="t" style="left:832.0px;top:640.6px;font-size:9.3px;color:#000;letter-spacing:0.389px;">Auto</div>
<svg style="left:1517px;top:644px" width="7" height="6" viewBox="0 0 7 6"><rect x="0" y="0" width="7" height="1.3" fill="#111"/><path d="M0 2.4 H7 L3.5 6 Z" fill="#111"/></svg>

<div class="abs" style="left:0px;top:663px;width:1536px;height:16px;background:#007acc;"></div>
<div class="t" style="left:2.5px;top:666.5px;font-size:9.6px;color:#c8ecff;letter-spacing:-0.350px;">Done</div>
<svg style="left:1272.5px;top:664.5px" width="14" height="14" viewBox="0 0 14 14"><circle cx="7" cy="7" r="6.3" fill="#dfeaf3"/><path d="M3 5 Q5 2.5 7.5 3 Q9 4.5 7.5 6 Q5.5 6.5 5.5 8.5 Q4 8 3 5 Z M8.5 8 Q11 7 11.5 9 Q10.5 11.5 8.5 11.5 Z" fill="#4a94c8"/><path d="M2.5 12 L12 1.5" stroke="#e8f2fa" stroke-width="1.6"/><path d="M2.5 12 L12 1.5" stroke="#5a8ab0" stroke-width=".7"/></svg>
<div class="t" style="left:1302.4px;top:666.5px;font-size:9.6px;color:#e6f3ff;letter-spacing:0.105px;">Offline</div>
<svg style="left:1349.5px;top:665px" width="12.5" height="12.5" viewBox="0 0 12.5 12.5"><circle cx="6.2" cy="6.2" r="6" fill="#e03030"/><path d="M4 4 L8.4 8.4 M8.4 4 L4 8.4" stroke="#300" stroke-width="1.7"/></svg>
<div class="t" style="left:1367.5px;top:666.5px;font-size:9.6px;color:#e6f3ff;">0</div>
<svg style="left:1385px;top:665px" width="12.5" height="12" viewBox="0 0 12.5 12"><path d="M6.2 .8 L12 11.2 H.5 Z" fill="#f4c820" stroke="#d8a800" stroke-width=".6"/><path d="M6.2 4.2 V8 M6.2 9.2 V10.2" stroke="#7a5c00" stroke-width="1.2"/></svg>
<div class="t" style="left:1403.5px;top:666.5px;font-size:9.6px;color:#e6f3ff;">0</div>
<div class="t" style="left:1423.8px;top:666.5px;font-size:9.6px;color:#e6f3ff;letter-spacing:0.137px;">Administrator</div>
<div class="t" style="left:1498.7px;top:666.5px;font-size:9.6px;color:#e6f3ff;letter-spacing:-0.796px;">LOCAL</div>

<div class="abs" style="left:0px;top:679px;width:1536px;height:32px;background:#1f2e3b;background:linear-gradient(90deg,#21333d 0%,#20313e 55%,#1d2b40 80%,#1b2840 100%)"></div>
<svg style="left:12.5px;top:688.5px" width="13.5" height="13.5" viewBox="0 0 13.5 13.5"><path d="M0 1.9 L5.6 1.1 V6.4 H0 Z M6.5 1 L13.5 0 V6.4 H6.5 Z M0 7.2 H5.6 V12.5 L0 11.7 Z M6.5 7.2 H13.5 V13.5 L6.5 12.6 Z" fill="#fff"/></svg>
<div class="abs" style="left:38.5px;top:679.5px;width:230.3px;height:31.5px;background:#f2f2f2;"></div>
<svg style="left:47.5px;top:688px" width="15" height="15" viewBox="0 0 15 15"><circle cx="9" cy="5.5" r="4.3" fill="none" stroke="#333" stroke-width="1.2"/><path d="M5.8 8.7 L1 13.7" stroke="#333" stroke-width="1.3"/></svg>
<div class="t" style="left:70.4px;top:690.2px;font-size:11.2px;color:#3a3a3a;letter-spacing:-0.092px;">Buscar</div>
<svg style="left:205px;top:679.5px" width="64" height="31.5" viewBox="0 0 64 31.5"><defs><clipPath id="bc"><rect x="0" y="0" width="63.8" height="31.5"/></clipPath></defs><g clip-path="url(#bc)"><path d="M27 18 L37 7 L43 10 L52 2.5 L58 6 L64 3 V22 H27 Z" fill="#6068a8"/><path d="M33 18 L43 10 L49 13 L58 6 L64 9 V22 H33 Z" fill="#8c90c8"/><ellipse cx="34" cy="35" rx="33" ry="19.5" fill="#8ea4cc"/><ellipse cx="31" cy="36" rx="21" ry="16.5" fill="#4a607e"/><ellipse cx="38" cy="17.5" rx="14.5" ry="7.6" fill="#f1eaf2"/><ellipse cx="41" cy="21" rx="10" ry="3.4" fill="#e2d3e3"/><circle cx="22" cy="13.2" r="5.6" fill="#f6f1f6"/><circle cx="18.3" cy="8.6" r="1.6" fill="#efe6ef"/><circle cx="25.2" cy="8.2" r="1.6" fill="#efe6ef"/><ellipse cx="21" cy="15.6" rx="2.6" ry="2.1" fill="#e6d8e2"/><circle cx="20.6" cy="15" r=".9" fill="#4a3a4a"/><circle cx="19.4" cy="12.2" r=".6" fill="#3a3040"/><circle cx="23.6" cy="12" r=".6" fill="#3a3040"/><ellipse cx="22.5" cy="22.6" rx="4.8" ry="2.1" fill="#f3edf3"/><ellipse cx="46" cy="23.4" rx="5.2" ry="2.6" fill="#f3edf3"/></g></svg>
<svg style="left:281px;top:688px" width="14" height="14" viewBox="0 0 14 14"><path d="M1.5 1 H9.5 M1.5 12.5 H9.5" stroke="#fff" stroke-width="1.3"/><rect x="2" y="3.4" width="7.4" height="6.6" fill="none" stroke="#fff" stroke-width="1.4"/><path d="M12.3 1 V12.5" stroke="#fff" stroke-width="1.3"/><rect x="11.2" y="5" width="2.4" height="2.6" fill="#fff"/></svg>
<svg style="left:320px;top:685.5px" width="19" height="18" viewBox="0 0 19 18"><defs><filter id="bl" x="-20%" y="-20%" width="140%" height="140%"><feGaussianBlur stdDeviation=".7"/></filter></defs><g filter="url(#bl)"><ellipse cx="5.2" cy="9.5" rx="3.6" ry="5" fill="#b4dc38"/><ellipse cx="6.8" cy="5.6" rx="5" ry="4.2" fill="#36b4ec"/><ellipse cx="12.6" cy="5.4" rx="4.6" ry="4.2" fill="#7a62e6"/><ellipse cx="14" cy="10.6" rx="4.2" ry="5.4" fill="#e85aae"/><ellipse cx="8.6" cy="13.2" rx="5.2" ry="3.8" fill="#f8902c"/><ellipse cx="11" cy="14.4" rx="3.6" ry="2.8" fill="#ee4a5a"/></g><path d="M8.6 4.6 Q10.4 5 10.6 7.6 L11 12.6 Q9.2 12.6 8.8 10 Z" fill="#25303c" opacity=".9"/></svg>
<svg style="left:358.5px;top:685.8px" width="20" height="19" viewBox="0 0 20 19"><defs><linearGradient id="ed" x1=".2" y1="0" x2=".6" y2="1"><stop offset="0" stop-color="#3cc6e6"/><stop offset=".55" stop-color="#1f86d8"/><stop offset="1" stop-color="#1658b4"/></linearGradient><linearGradient id="eg" x1="0" y1="0" x2="1" y2="1"><stop offset="0" stop-color="#3ad0c8"/><stop offset="1" stop-color="#5cd45a"/></linearGradient></defs><circle cx="10" cy="9.5" r="9.3" fill="url(#ed)"/><path d="M10 .4 Q19.3 .8 19.3 9.5 Q19 13.4 14.6 13.2 H10.6 Q12.6 11.6 12.2 9.4 Q11.4 6.4 7.6 6.6 Q3.6 7 2.4 11 Q.6 2 10 .4 Z" fill="url(#eg)"/><path d="M6.4 11.4 Q6.2 8.2 9 7.8 Q11.4 7.8 11.8 10 Q11.6 12 9.8 13.2 Q11 16 15.6 15.2 Q12 18.6 8.6 16.6 Q6.4 14.8 6.4 11.4 Z" fill="#173e86"/></svg>
<svg style="left:398px;top:687.5px" width="19" height="16" viewBox="0 0 19 16"><path d="M.5 2 Q.5 1 1.5 1 H7 L9 3 H17.5 Q18.5 3 18.5 4 V14 Q18.5 15 17.5 15 H1.5 Q.5 15 .5 14 Z" fill="#f0b830"/><path d="M.5 6 H18.5 V14 Q18.5 15 17.5 15 H1.5 Q.5 15 .5 14 Z" fill="#fcd860"/><rect x="5" y="9.5" width="9" height="5.5" fill="#3a90d8"/><rect x="7" y="11.5" width="5" height="3.5" fill="#fcd860"/></svg>
<div class="abs" style="left:392px;top:709px;width:31px;height:2px;background:#8ab4e0;"></div>
<svg style="left:438px;top:686px" width="18" height="18" viewBox="0 0 18 18"><path d="M5.5 5 V3.5 Q5.5 1 9 1 Q12.5 1 12.5 3.5 V5" fill="none" stroke="#3a8ad8" stroke-width="1.4"/><rect x="1" y="5" width="16" height="12.5" rx="1.8" fill="#f4f4f4"/><rect x="5.2" y="7.8" width="3.2" height="3.2" fill="#f04a2a"/><rect x="9.4" y="7.8" width="3.2" height="3.2" fill="#7ab82a"/><rect x="5.2" y="12" width="3.2" height="3.2" fill="#2a9ae8"/><rect x="9.4" y="12" width="3.2" height="3.2" fill="#f8b820"/></svg>
<svg style="left:476.5px;top:687px" width="20" height="16" viewBox="0 0 20 16"><path d="M1 6 L10 .5 L19 6 V15.5 H1 Z" fill="#1464b8"/><path d="M1 6 L10 11.5 L19 6 V15 Q19 15.5 18.5 15.5 H1.5 Q1 15.5 1 15 Z" fill="#3a9af0"/><path d="M1 6 L10 12 L19 6" fill="none" stroke="#9ad0fc" stroke-width="1"/></svg>
<svg style="left:516px;top:688px" width="18" height="14" viewBox="0 0 18 14"><rect x="0" y="0" width="18" height="13" fill="#2a8ad8"/><rect x="1" y="1" width="16" height="11" fill="#8ac8f4"/><rect x="2" y="2.5" width="7" height="7" fill="#e8f4fc"/><circle cx="5.5" cy="6" r="2" fill="#2a7ac8"/><rect x="10.5" y="3" width="5.5" height="1.4" fill="#1a6ab8"/><rect x="10.5" y="6" width="5.5" height="1.4" fill="#1a6ab8"/></svg>
<div class="abs" style="left:509px;top:709px;width:31px;height:2px;background:#8ab4e0;"></div>
<svg style="left:555.5px;top:686px" width="17" height="18" viewBox="0 0 17 18"><path d="M5 1 L15.5 2.5 L12 16.5 L1 15 Z" fill="#c8e4e8"/><path d="M5 1 L15.5 2.5 L14.8 5 L4.3 3.5 Z" fill="#7fb8c4"/><path d="M12 16.5 L15.5 2.5 L16.5 4 L13.5 17 Z" fill="#5a8a94"/></svg>
<div class="abs" style="left:549px;top:709px;width:31px;height:2px;background:#8ab4e0;"></div>
<div class="abs" style="left:584px;top:679px;width:39px;height:32px;background:#4a5761;"></div>
<div class="abs" style="left:584px;top:709px;width:39px;height:2px;background:#8ab4e0;"></div>
<svg style="left:594.5px;top:686px" width="18" height="18" viewBox="0 0 18 18"><defs><linearGradient id="ap" x1="0" y1="0" x2="1" y2="1"><stop offset="0" stop-color="#28b0e0"/><stop offset=".5" stop-color="#4a50c8"/><stop offset="1" stop-color="#2a70d0"/></linearGradient></defs><rect x=".5" y=".5" width="17" height="17" rx="2" fill="url(#ap)" stroke="#cfe0f8" stroke-width=".8"/><path d="M4 2 L14 2 L8 11 Z" fill="#d040b0" opacity=".85"/><circle cx="12" cy="12.5" r="3.6" fill="#fff"/><circle cx="12" cy="12.5" r="1.4" fill="#3a7ad8"/></svg>
<svg style="left:1214.5px;top:688.5px" width="19" height="14" viewBox="0 0 19 14"><path d="M.5 3 L3 .5 L7 4.5 L9 2.5 L13 6.5 V3.5 L18 3.5 V13.5 H8 V10.5 H11 L8.5 8 L6.5 10 Z" fill="#e8602a"/></svg>
<div class="t" style="left:1239.0px;top:691.0px;font-size:10.3px;color:#fff;letter-spacing:0.111px;">GOOG*</div>
<div class="t" style="left:1284.3px;top:691.1px;font-size:10.2px;color:#e0515c;letter-spacing:0.016px;">-1.16%</div>
<svg style="left:1336.5px;top:691.5px" width="10" height="6.5" viewBox="0 0 10 6.5"><path stroke="#fff" fill="none" stroke-width="1.2" d="M.6 5.8 L5 1 L9.4 5.8"/></svg>
<svg style="left:1355.5px;top:688.5px" width="11" height="14" viewBox="0 0 11 14"><rect x="1.5" y=".6" width="7" height="9.6" rx="1.6" stroke="#fff" fill="none" stroke-width="1.1"/><circle cx="5" cy="5.2" r="1.6" stroke="#fff" fill="none" stroke-width="1"/><path stroke="#fff" fill="none" stroke-width="1.1" d="M2.5 13 H7.5 M9 4 H10.5 V6.5 H9"/></svg>
<svg style="left:1373px;top:689.5px" width="14" height="12" viewBox="0 0 14 12"><path stroke="#fff" fill="none" stroke-width="1.1" d="M.6 4 H3 L6 1 V11 L3 8 H.6 Z M8 4 Q9.3 6 8 8 M10 2.5 Q12.3 6 10 9.5 M12 1 Q15 6 12 11"/></svg>
<svg style="left:1392.5px;top:689px" width="13" height="13" viewBox="0 0 13 13"><path stroke="#fff" fill="none" stroke-width="1.1" d="M3.5 1 H12.4 V8 H3.5 Z M.6 3.5 H3.5 M.6 3.5 V12 M.6 12 H4 M6 8 V11 M4 11 H11"/></svg>
<div class="t" style="left:1415.7px;top:684.0px;font-size:9.3px;color:#fff;letter-spacing:-2.005px;">ESP</div>
<div class="t" style="left:1418.7px;top:698.0px;font-size:9.3px;color:#fff;letter-spacing:-3.107px;">ES</div>
<div class="t" style="left:1443.5px;top:684.0px;font-size:9.3px;color:#fff;letter-spacing:-0.223px;">10:08 a. m.</div>
<div class="t" style="left:1442.3px;top:698.0px;font-size:9.3px;color:#fff;letter-spacing:-0.016px;">27/02/2025</div>
<svg style="left:1503px;top:688px" width="19" height="16" viewBox="0 0 19 16"><path d="M.6 .6 H12.4 V9.5 H6 L3.5 12 V9.5 H.6 Z" fill="#fff"/><path d="M2.5 3 H10.5 M2.5 5 H10.5 M2.5 7 H8" stroke="#1d2b40" stroke-width=".8"/><circle cx="13.3" cy="10.8" r="4.4" fill="#3a4658" stroke="#c8d0d8" stroke-width=".8"/><text x="11.3" y="13.8" font-family="Liberation Sans" font-size="7.8" fill="#fff">3</text></svg>

</body>
</html>
